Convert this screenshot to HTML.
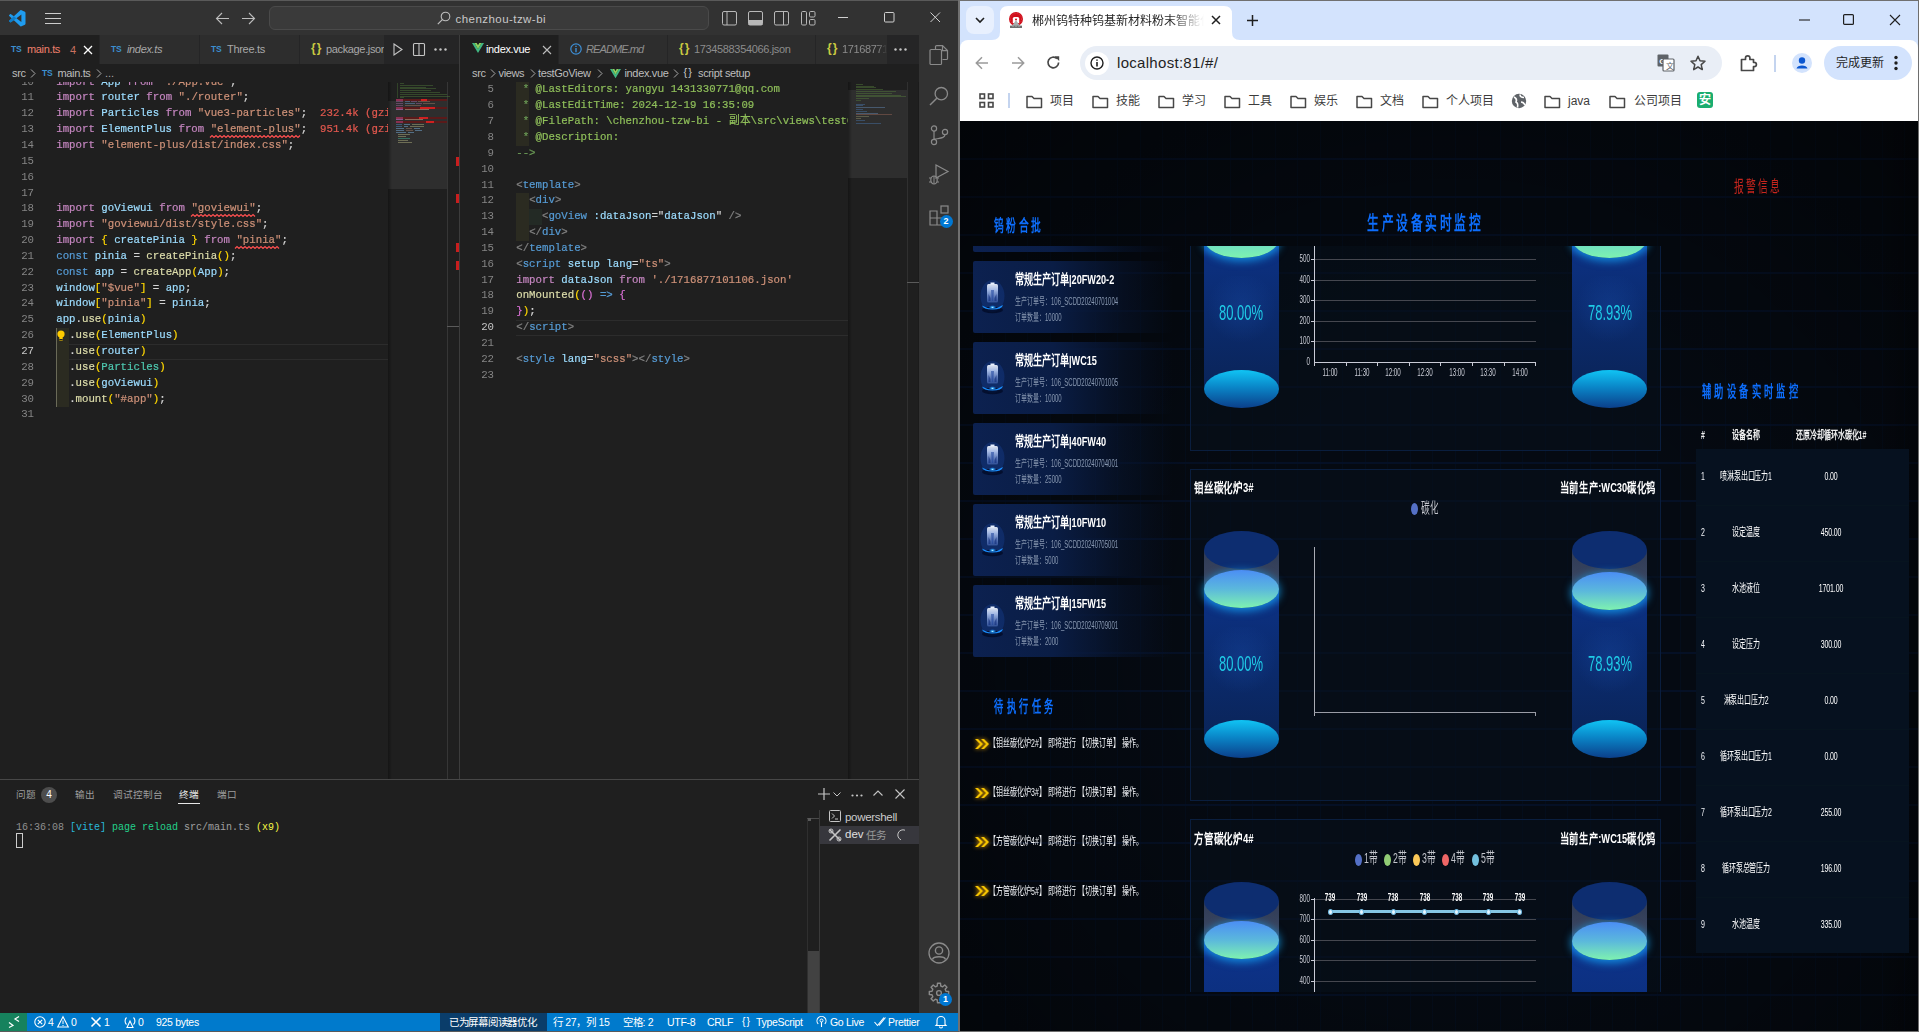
<!DOCTYPE html><html lang="zh-CN"><head><meta charset="utf-8"><title>screen</title><style>
*{margin:0;padding:0;box-sizing:border-box}
html,body{width:1919px;height:1032px;overflow:hidden;background:#1e1e1e;font-family:"Liberation Sans",sans-serif}
.a{position:absolute}
.t{white-space:pre;line-height:1}
.mono{font-family:"Liberation Mono",monospace}
svg{position:absolute;overflow:visible}
</style></head><body><div class="a " style="left:0px;top:0px;width:959px;height:1032px;background:#1f1f1f"></div><div class="a " style="left:0px;top:0px;width:960px;height:1px;background:#5a5a5a"></div><div class="a " style="left:0px;top:1px;width:958px;height:34px;background:#323232"></div><div class="a " style="left:919px;top:35px;width:39px;height:978px;background:#323232"></div><div class="a " style="left:958px;top:0px;width:2px;height:1032px;background:#707070"></div><svg style="left:9px;top:10px" width="16.5" height="16.5" viewBox="0 0 100 100"><path fill="#1f9cf0" d="M96.46 10.8L75.86.88C73.48-.26 70.62.22 68.75 2.09L29.3 38.08 12.12 25.04C10.52 23.83 8.28 23.93 6.8 25.28L1.29 30.29C-.52 31.94-.53 34.8 1.29 36.45L16.19 50 1.29 63.55C-.53 65.2-.52 68.06 1.29 69.71L6.8 74.72C8.28 76.07 10.52 76.17 12.12 74.96L29.3 61.92 68.75 97.91C70.62 99.78 73.48 100.26 75.86 99.12L96.46 89.2C98.62 88.16 100 85.97 100 83.57V16.43C100 14.03 98.62 11.84 96.46 10.8ZM75.01 72.7L45.08 50 75.01 27.3V72.7Z"/><path fill="#0065a9" opacity=".55" d="M1.29 63.55C-.53 65.2-.52 68.06 1.29 69.71L6.8 74.72C8.28 76.07 10.52 76.17 12.12 74.96L29.3 61.92 45.08 50 29.3 38.08 16.19 50Z"/></svg><svg style="left:45px;top:13px" width="17" height="11"><path d="M0 .5H16M0 5.5H16M0 10.5H16" stroke="#cccccc" stroke-width="1"/></svg><svg style="left:215px;top:12px" width="15" height="13"><path d="M14 6.5H1.5M7 1L1.5 6.5L7 12" fill="none" stroke="#bdbdbd" stroke-width="1.1"/></svg><svg style="left:241px;top:12px" width="15" height="13"><path d="M1 6.5H13.5M8 1L13.5 6.5L8 12" fill="none" stroke="#bdbdbd" stroke-width="1.1"/></svg><div class="a " style="left:269px;top:6px;width:440px;height:24px;background:#3a3a3a;border:1px solid #4a4a4a;border-radius:6px"></div><svg style="left:437px;top:11px" width="14" height="14"><circle cx="8.5" cy="5.5" r="4.3" fill="none" stroke="#bdbdbd" stroke-width="1.1"/><path d="M5.3 8.7L0.8 13.2" stroke="#bdbdbd" stroke-width="1.2"/></svg><div class="a t " style="left:455.5px;top:14px;font-size:11.5px;color:#c8c8c8;letter-spacing:0.45px">chenzhou-tzw-bi</div><svg style="left:722px;top:11px" width="16" height="15"><rect x=".5" y=".5" width="14" height="13.5" rx="1.5" fill="none" stroke="#b8b8b8" stroke-width="1"/><path d="M5 .5V14" fill="none" stroke="#b8b8b8" stroke-width="1"/></svg><svg style="left:748px;top:11px" width="16" height="15"><rect x=".5" y=".5" width="14" height="13.5" rx="1.5" fill="none" stroke="#b8b8b8" stroke-width="1"/><rect x=".5" y="9" width="14" height="5" fill="#b8b8b8"/></svg><svg style="left:774px;top:11px" width="16" height="15"><rect x=".5" y=".5" width="14" height="13.5" rx="1.5" fill="none" stroke="#b8b8b8" stroke-width="1"/><path d="M9.5 .5V14" fill="none" stroke="#b8b8b8" stroke-width="1"/></svg><svg style="left:801px;top:11px" width="16" height="15"><rect x=".5" y=".5" width="5" height="13.5" rx="1.2" fill="none" stroke="#b8b8b8" stroke-width="1"/><rect x="8.5" y=".5" width="5.5" height="5.5" rx="1.2" fill="none" stroke="#b8b8b8" stroke-width="1"/><rect x="8.5" y="8.5" width="5.5" height="5.5" rx="1.2" fill="none" stroke="#b8b8b8" stroke-width="1"/></svg><svg style="left:838px;top:17px" width="11" height="2"><path d="M0 .5H10" stroke="#d0d0d0" stroke-width="1"/></svg><svg style="left:884px;top:12px" width="11" height="11"><rect x=".5" y=".5" width="9.5" height="9.5" rx="1" fill="none" stroke="#d0d0d0" stroke-width="1"/></svg><svg style="left:930px;top:12px" width="11" height="11"><path d="M.5 .5L10 10M10 .5L.5 10" stroke="#d0d0d0" stroke-width="1"/></svg><div class="a " style="left:0px;top:35px;width:459px;height:29px;background:#252526"></div><div class="a " style="left:0px;top:35px;width:99px;height:29px;background:#1f1f1f"></div><div class="a " style="left:100px;top:35px;width:99px;height:29px;background:#2d2d2d"></div><div class="a " style="left:200px;top:35px;width:99px;height:29px;background:#2d2d2d"></div><div class="a " style="left:300px;top:35px;width:84px;height:29px;background:#2d2d2d"></div><div class="a t " style="left:11px;top:45px;font-size:8.5px;font-weight:bold;color:#3c8fd0;letter-spacing:-0.3px">TS</div><div class="a t " style="left:27px;top:44px;font-size:11px;letter-spacing:-0.35px;color:#f0806c">main.ts</div><div class="a t " style="left:70px;top:44.5px;font-size:11px;color:#c9705f">4</div><svg style="left:83px;top:45px" width="10" height="10"><path d="M1 1L9 9M9 1L1 9" stroke="#ffffff" stroke-width="1.3"/></svg><div class="a t " style="left:111px;top:45px;font-size:8.5px;font-weight:bold;color:#3c8fd0;letter-spacing:-0.3px">TS</div><div class="a t " style="left:127px;top:44px;font-size:11px;letter-spacing:-0.35px;color:#a8a8a8;font-style:italic">index.ts</div><div class="a t " style="left:211px;top:45px;font-size:8.5px;font-weight:bold;color:#3c8fd0;letter-spacing:-0.3px">TS</div><div class="a t " style="left:227px;top:44px;font-size:11px;letter-spacing:-0.3px;color:#a8a8a8">Three.ts</div><div class="a t " style="left:311px;top:42px;font-size:12px;font-weight:bold;color:#cbcb41;letter-spacing:1px">{}</div><div class="a" style="left:326px;top:35px;width:58px;height:29px;overflow:hidden"><div class="a t" style="left:0;top:9px;font-size:11px;letter-spacing:-0.35px;color:#a8a8a8">package.json</div></div><svg style="left:393px;top:43px" width="10" height="13"><path d="M1 1L9 6.5L1 12Z" fill="none" stroke="#c5c5c5" stroke-width="1.1"/></svg><svg style="left:413px;top:43px" width="12" height="13"><rect x=".5" y=".5" width="11" height="12" rx="1" fill="none" stroke="#c5c5c5" stroke-width="1.1"/><path d="M6 .5V12.5" stroke="#c5c5c5" stroke-width="1.1"/></svg><svg style="left:434px;top:48px" width="13" height="3"><circle cx="1.5" cy="1.5" r="1.2" fill="#c5c5c5"/><circle cx="6.5" cy="1.5" r="1.2" fill="#c5c5c5"/><circle cx="11.5" cy="1.5" r="1.2" fill="#c5c5c5"/></svg><div class="a t " style="left:12px;top:68px;font-size:11px;letter-spacing:-0.35px;color:#bdbdbd">src</div><svg style="left:30px;top:69px" width="6" height="9"><path d="M1 .5L5 4.5L1 8.5" fill="none" stroke="#a9a9a9" stroke-width="1"/></svg><div class="a t " style="left:42px;top:69px;font-size:8.5px;font-weight:bold;color:#3c8fd0;letter-spacing:-0.3px">TS</div><div class="a t " style="left:57.5px;top:68px;font-size:11px;letter-spacing:-0.35px;color:#bdbdbd">main.ts</div><svg style="left:95.5px;top:69px" width="6" height="9"><path d="M1 .5L5 4.5L1 8.5" fill="none" stroke="#a9a9a9" stroke-width="1"/></svg><div class="a t " style="left:105px;top:68px;font-size:11px;color:#a9a9a9">...</div><div class="a " style="left:388px;top:82px;width:59px;height:697px;background:#1f1f1f"></div><div class="a " style="left:388px;top:101px;width:59px;height:88px;background:#2e2e2e"></div><div class="a " style="left:388px;top:82px;width:4px;height:697px;background:linear-gradient(90deg,rgba(0,0,0,.35),rgba(0,0,0,0))"></div><div class="a " style="left:447px;top:82px;width:12px;height:697px;background:#1f1f1f"></div><div class="a " style="left:447px;top:82px;width:1px;height:697px;background:#363636"></div><div class="a " style="left:456px;top:157px;width:3px;height:9px;background:#c81e1e"></div><div class="a " style="left:456px;top:194px;width:3px;height:9px;background:#c81e1e"></div><div class="a " style="left:456px;top:243px;width:3px;height:9px;background:#c81e1e"></div><div class="a " style="left:456px;top:261px;width:3px;height:9px;background:#c81e1e"></div><div class="a " style="left:447px;top:326px;width:12px;height:1px;background:#5a5a5a"></div><div class="a" style="left:388px;top:82px;width:59px;height:110px"><div class="a" style="left:9px;top:1px;width:1px;height:15px;background:#3d5a2e;opacity:.6"></div><div class="a" style="left:12px;top:1.0px;width:4px;height:1px;background:#4f7a3a;opacity:.45"></div><div class="a" style="left:12px;top:2.8px;width:33px;height:1px;background:#4f7a3a;opacity:.45"></div><div class="a" style="left:12px;top:4.6px;width:26px;height:1px;background:#4f7a3a;opacity:.45"></div><div class="a" style="left:12px;top:6.4px;width:36px;height:1px;background:#4f7a3a;opacity:.45"></div><div class="a" style="left:12px;top:8.2px;width:31px;height:1px;background:#4f7a3a;opacity:.45"></div><div class="a" style="left:12px;top:10.0px;width:40px;height:1px;background:#4f7a3a;opacity:.45"></div><div class="a" style="left:12px;top:11.8px;width:47px;height:1px;background:#4f7a3a;opacity:.45"></div><div class="a" style="left:12px;top:13.6px;width:50px;height:1px;background:#4f7a3a;opacity:.45"></div><div class="a" style="left:12px;top:15.4px;width:4px;height:1px;background:#4f7a3a;opacity:.45"></div><div class="a" style="left:8px;top:16.5px;width:51px;height:2px;background:#5a1a1a"></div><div class="a" style="left:33px;top:16.5px;width:6px;height:2px;background:#d02020"></div><div class="a" style="left:8px;top:16.5px;width:7px;height:2px;background:#8a3050"></div><div class="a" style="left:8px;top:18.5px;width:7px;height:1px;background:#8a5a8a;opacity:.6"></div><div class="a" style="left:17px;top:18.5px;width:5px;height:1px;background:#5d86a8;opacity:.6"></div><div class="a" style="left:23px;top:18.5px;width:6px;height:1px;background:#8a5a8a;opacity:.6"></div><div class="a" style="left:30px;top:18.5px;width:12px;height:1px;background:#8a6a5a;opacity:.6"></div><div class="a" style="left:8px;top:20.5px;width:7px;height:1px;background:#8a5a8a;opacity:.6"></div><div class="a" style="left:17px;top:20.5px;width:10px;height:1px;background:#5d86a8;opacity:.6"></div><div class="a" style="left:28px;top:20.5px;width:6px;height:1px;background:#8a5a8a;opacity:.6"></div><div class="a" style="left:35px;top:20.5px;width:12px;height:1px;background:#8a6a5a;opacity:.6"></div><div class="a" style="left:8px;top:22.5px;width:7px;height:1px;background:#8a5a8a;opacity:.6"></div><div class="a" style="left:17px;top:22.5px;width:16px;height:1px;background:#8a6a5a;opacity:.6"></div><div class="a" style="left:8px;top:24.7px;width:51px;height:2px;background:#5a1a1a"></div><div class="a" style="left:32px;top:24.7px;width:15px;height:2px;background:#d02020"></div><div class="a" style="left:8px;top:24.7px;width:7px;height:2px;background:#8a3050"></div><div class="a" style="left:8px;top:26.7px;width:7px;height:1.3px;background:#8a5a8a"></div><div class="a" style="left:17px;top:26.7px;width:24px;height:1.3px;background:#8a6a5a"></div><div class="a" style="left:8px;top:35px;width:51px;height:2px;background:#5a1a1a"></div><div class="a" style="left:31px;top:35px;width:9px;height:2px;background:#d02020"></div><div class="a" style="left:8px;top:35px;width:7px;height:2px;background:#8a3050"></div><div class="a" style="left:8px;top:37px;width:7px;height:1.3px;background:#8a5a8a"></div><div class="a" style="left:17px;top:37px;width:18px;height:1.3px;background:#8a6a5a"></div><div class="a" style="left:8px;top:39px;width:51px;height:2px;background:#5a1a1a"></div><div class="a" style="left:38px;top:39px;width:8px;height:2px;background:#d02020"></div><div class="a" style="left:8px;top:39px;width:7px;height:2px;background:#8a3050"></div><div class="a" style="left:8px;top:41.5px;width:6px;height:1px;background:#4a78a8;opacity:.6"></div><div class="a" style="left:16px;top:41.5px;width:6px;height:1px;background:#6a9ac0;opacity:.6"></div><div class="a" style="left:24px;top:41.5px;width:12px;height:1px;background:#9a9a70;opacity:.6"></div><div class="a" style="left:8px;top:43.5px;width:6px;height:1px;background:#4a78a8;opacity:.6"></div><div class="a" style="left:16px;top:43.5px;width:4px;height:1px;background:#6a9ac0;opacity:.6"></div><div class="a" style="left:22px;top:43.5px;width:14px;height:1px;background:#9a9a70;opacity:.6"></div><div class="a" style="left:8px;top:45.5px;width:8px;height:1px;background:#6a9ac0;opacity:.6"></div><div class="a" style="left:18px;top:45.5px;width:6px;height:1px;background:#8a6a5a;opacity:.6"></div><div class="a" style="left:26px;top:45.5px;width:6px;height:1px;background:#6a9ac0;opacity:.6"></div><div class="a" style="left:8px;top:47.5px;width:8px;height:1px;background:#6a9ac0;opacity:.6"></div><div class="a" style="left:18px;top:47.5px;width:7px;height:1px;background:#8a6a5a;opacity:.6"></div><div class="a" style="left:27px;top:47.5px;width:7px;height:1px;background:#6a9ac0;opacity:.6"></div><div class="a" style="left:8px;top:49.5px;width:10px;height:1px;background:#6a9ac0;opacity:.6"></div><div class="a" style="left:20px;top:49.5px;width:6px;height:1px;background:#6a9ac0;opacity:.6"></div><div class="a" style="left:10px;top:51.5px;width:12px;height:1px;background:#9a9a70;opacity:.6"></div><div class="a" style="left:10px;top:53.5px;width:8px;height:1px;background:#9a9a70;opacity:.6"></div><div class="a" style="left:10px;top:55.5px;width:12px;height:1px;background:#3a9a80;opacity:.6"></div><div class="a" style="left:10px;top:57.5px;width:10px;height:1px;background:#9a9a70;opacity:.6"></div><div class="a" style="left:10px;top:59.5px;width:14px;height:1px;background:#9a9a70;opacity:.6"></div></div><div class="a" style="left:0;top:82px;width:388px;height:697px;overflow:hidden"><div class="a" style="left:56px;top:262.00px;width:332px;height:15.85px;border-top:1px solid #2c2c2c;border-bottom:1px solid #2c2c2c"></div><div class="a" style="left:56px;top:246.15px;width:13px;height:79.25px;background:#2b2b21"></div><div class="a" style="left:56px;top:246.15px;width:1px;height:79.25px;background:#6a6a58"></div><div class="a t mono" style="left:0;width:34px;text-align:right;top:-7.45px;height:15.85px;line-height:15.85px;font-size:10.72px;transform:scaleY(1.1);color:#858585">10</div><div class="a t mono" style="left:56.25px;top:-7.45px;height:15.85px;line-height:15.85px;font-size:10.72px;transform:scaleY(1.1);-webkit-text-stroke:0.2px;"><span style="color:#c586c0">import</span><span style="color:#d4d4d4"> </span><span style="color:#9cdcfe">App</span><span style="color:#d4d4d4"> </span><span style="color:#c586c0">from</span><span style="color:#d4d4d4"> </span><span style="color:#ce9178">"./App.vue"</span><span style="color:#d4d4d4">;</span></div><div class="a t mono" style="left:0;width:34px;text-align:right;top:8.40px;height:15.85px;line-height:15.85px;font-size:10.72px;transform:scaleY(1.1);color:#858585">11</div><div class="a t mono" style="left:56.25px;top:8.40px;height:15.85px;line-height:15.85px;font-size:10.72px;transform:scaleY(1.1);-webkit-text-stroke:0.2px;"><span style="color:#c586c0">import</span><span style="color:#d4d4d4"> </span><span style="color:#9cdcfe">router</span><span style="color:#d4d4d4"> </span><span style="color:#c586c0">from</span><span style="color:#d4d4d4"> </span><span style="color:#ce9178">"./router"</span><span style="color:#d4d4d4">;</span></div><div class="a t mono" style="left:0;width:34px;text-align:right;top:24.25px;height:15.85px;line-height:15.85px;font-size:10.72px;transform:scaleY(1.1);color:#858585">12</div><div class="a t mono" style="left:56.25px;top:24.25px;height:15.85px;line-height:15.85px;font-size:10.72px;transform:scaleY(1.1);-webkit-text-stroke:0.2px;"><span style="color:#c586c0">import</span><span style="color:#d4d4d4"> </span><span style="color:#9cdcfe">Particles</span><span style="color:#d4d4d4"> </span><span style="color:#c586c0">from</span><span style="color:#d4d4d4"> </span><span style="color:#ce9178">"vue3-particles"</span><span style="color:#d4d4d4">;</span><span style="color:#e2584e">  232.4k (gzip: 60.1k)</span></div><div class="a t mono" style="left:0;width:34px;text-align:right;top:40.10px;height:15.85px;line-height:15.85px;font-size:10.72px;transform:scaleY(1.1);color:#858585">13</div><div class="a t mono" style="left:56.25px;top:40.10px;height:15.85px;line-height:15.85px;font-size:10.72px;transform:scaleY(1.1);-webkit-text-stroke:0.2px;"><span style="color:#c586c0">import</span><span style="color:#d4d4d4"> </span><span style="color:#9cdcfe">ElementPlus</span><span style="color:#d4d4d4"> </span><span style="color:#c586c0">from</span><span style="color:#d4d4d4"> </span><span style="color:#ce9178">"element-plus"</span><span style="color:#d4d4d4">;</span><span style="color:#e2584e">  951.4k (gzip: 282k)</span></div><div class="a t mono" style="left:0;width:34px;text-align:right;top:55.95px;height:15.85px;line-height:15.85px;font-size:10.72px;transform:scaleY(1.1);color:#858585">14</div><div class="a t mono" style="left:56.25px;top:55.95px;height:15.85px;line-height:15.85px;font-size:10.72px;transform:scaleY(1.1);-webkit-text-stroke:0.2px;"><span style="color:#c586c0">import</span><span style="color:#d4d4d4"> </span><span style="color:#ce9178">"element-plus/dist/index.css"</span><span style="color:#d4d4d4">;</span></div><div class="a t mono" style="left:0;width:34px;text-align:right;top:71.80px;height:15.85px;line-height:15.85px;font-size:10.72px;transform:scaleY(1.1);color:#858585">15</div><div class="a t mono" style="left:0;width:34px;text-align:right;top:87.65px;height:15.85px;line-height:15.85px;font-size:10.72px;transform:scaleY(1.1);color:#858585">16</div><div class="a t mono" style="left:0;width:34px;text-align:right;top:103.50px;height:15.85px;line-height:15.85px;font-size:10.72px;transform:scaleY(1.1);color:#858585">17</div><div class="a t mono" style="left:0;width:34px;text-align:right;top:119.35px;height:15.85px;line-height:15.85px;font-size:10.72px;transform:scaleY(1.1);color:#858585">18</div><div class="a t mono" style="left:56.25px;top:119.35px;height:15.85px;line-height:15.85px;font-size:10.72px;transform:scaleY(1.1);-webkit-text-stroke:0.2px;"><span style="color:#c586c0">import</span><span style="color:#d4d4d4"> </span><span style="color:#9cdcfe">goViewui</span><span style="color:#d4d4d4"> </span><span style="color:#c586c0">from</span><span style="color:#d4d4d4"> </span><span style="color:#ce9178">"goviewui"</span><span style="color:#d4d4d4">;</span></div><div class="a t mono" style="left:0;width:34px;text-align:right;top:135.20px;height:15.85px;line-height:15.85px;font-size:10.72px;transform:scaleY(1.1);color:#858585">19</div><div class="a t mono" style="left:56.25px;top:135.20px;height:15.85px;line-height:15.85px;font-size:10.72px;transform:scaleY(1.1);-webkit-text-stroke:0.2px;"><span style="color:#c586c0">import</span><span style="color:#d4d4d4"> </span><span style="color:#ce9178">"goviewui/dist/style.css"</span><span style="color:#d4d4d4">;</span></div><div class="a t mono" style="left:0;width:34px;text-align:right;top:151.05px;height:15.85px;line-height:15.85px;font-size:10.72px;transform:scaleY(1.1);color:#858585">20</div><div class="a t mono" style="left:56.25px;top:151.05px;height:15.85px;line-height:15.85px;font-size:10.72px;transform:scaleY(1.1);-webkit-text-stroke:0.2px;"><span style="color:#c586c0">import</span><span style="color:#d4d4d4"> </span><span style="color:#ffd700">{</span><span style="color:#9cdcfe"> createPinia </span><span style="color:#ffd700">}</span><span style="color:#d4d4d4"> </span><span style="color:#c586c0">from</span><span style="color:#d4d4d4"> </span><span style="color:#ce9178">"pinia"</span><span style="color:#d4d4d4">;</span></div><div class="a t mono" style="left:0;width:34px;text-align:right;top:166.90px;height:15.85px;line-height:15.85px;font-size:10.72px;transform:scaleY(1.1);color:#858585">21</div><div class="a t mono" style="left:56.25px;top:166.90px;height:15.85px;line-height:15.85px;font-size:10.72px;transform:scaleY(1.1);-webkit-text-stroke:0.2px;"><span style="color:#569cd6">const</span><span style="color:#d4d4d4"> </span><span style="color:#9cdcfe">pinia</span><span style="color:#d4d4d4"> = </span><span style="color:#dcdcaa">createPinia</span><span style="color:#ffd700">()</span><span style="color:#d4d4d4">;</span></div><div class="a t mono" style="left:0;width:34px;text-align:right;top:182.75px;height:15.85px;line-height:15.85px;font-size:10.72px;transform:scaleY(1.1);color:#858585">22</div><div class="a t mono" style="left:56.25px;top:182.75px;height:15.85px;line-height:15.85px;font-size:10.72px;transform:scaleY(1.1);-webkit-text-stroke:0.2px;"><span style="color:#569cd6">const</span><span style="color:#d4d4d4"> </span><span style="color:#9cdcfe">app</span><span style="color:#d4d4d4"> = </span><span style="color:#dcdcaa">createApp</span><span style="color:#ffd700">(</span><span style="color:#9cdcfe">App</span><span style="color:#ffd700">)</span><span style="color:#d4d4d4">;</span></div><div class="a t mono" style="left:0;width:34px;text-align:right;top:198.60px;height:15.85px;line-height:15.85px;font-size:10.72px;transform:scaleY(1.1);color:#858585">23</div><div class="a t mono" style="left:56.25px;top:198.60px;height:15.85px;line-height:15.85px;font-size:10.72px;transform:scaleY(1.1);-webkit-text-stroke:0.2px;"><span style="color:#9cdcfe">window</span><span style="color:#ffd700">[</span><span style="color:#ce9178">"$vue"</span><span style="color:#ffd700">]</span><span style="color:#d4d4d4"> = </span><span style="color:#9cdcfe">app</span><span style="color:#d4d4d4">;</span></div><div class="a t mono" style="left:0;width:34px;text-align:right;top:214.45px;height:15.85px;line-height:15.85px;font-size:10.72px;transform:scaleY(1.1);color:#858585">24</div><div class="a t mono" style="left:56.25px;top:214.45px;height:15.85px;line-height:15.85px;font-size:10.72px;transform:scaleY(1.1);-webkit-text-stroke:0.2px;"><span style="color:#9cdcfe">window</span><span style="color:#ffd700">[</span><span style="color:#ce9178">"pinia"</span><span style="color:#ffd700">]</span><span style="color:#d4d4d4"> = </span><span style="color:#9cdcfe">pinia</span><span style="color:#d4d4d4">;</span></div><div class="a t mono" style="left:0;width:34px;text-align:right;top:230.30px;height:15.85px;line-height:15.85px;font-size:10.72px;transform:scaleY(1.1);color:#858585">25</div><div class="a t mono" style="left:56.25px;top:230.30px;height:15.85px;line-height:15.85px;font-size:10.72px;transform:scaleY(1.1);-webkit-text-stroke:0.2px;"><span style="color:#9cdcfe">app</span><span style="color:#d4d4d4">.</span><span style="color:#dcdcaa">use</span><span style="color:#ffd700">(</span><span style="color:#9cdcfe">pinia</span><span style="color:#ffd700">)</span></div><div class="a t mono" style="left:0;width:34px;text-align:right;top:246.15px;height:15.85px;line-height:15.85px;font-size:10.72px;transform:scaleY(1.1);color:#858585">26</div><div class="a t mono" style="left:56.25px;top:246.15px;height:15.85px;line-height:15.85px;font-size:10.72px;transform:scaleY(1.1);-webkit-text-stroke:0.2px;"><span style="color:#d4d4d4">  </span><span style="color:#d4d4d4">.</span><span style="color:#dcdcaa">use</span><span style="color:#ffd700">(</span><span style="color:#9cdcfe">ElementPlus</span><span style="color:#ffd700">)</span></div><div class="a t mono" style="left:0;width:34px;text-align:right;top:262.00px;height:15.85px;line-height:15.85px;font-size:10.72px;transform:scaleY(1.1);color:#c6c6c6">27</div><div class="a t mono" style="left:56.25px;top:262.00px;height:15.85px;line-height:15.85px;font-size:10.72px;transform:scaleY(1.1);-webkit-text-stroke:0.2px;"><span style="color:#d4d4d4">  </span><span style="color:#d4d4d4">.</span><span style="color:#dcdcaa">use</span><span style="color:#ffd700">(</span><span style="color:#9cdcfe">router</span><span style="color:#ffd700">)</span></div><div class="a t mono" style="left:0;width:34px;text-align:right;top:277.85px;height:15.85px;line-height:15.85px;font-size:10.72px;transform:scaleY(1.1);color:#858585">28</div><div class="a t mono" style="left:56.25px;top:277.85px;height:15.85px;line-height:15.85px;font-size:10.72px;transform:scaleY(1.1);-webkit-text-stroke:0.2px;"><span style="color:#d4d4d4">  </span><span style="color:#d4d4d4">.</span><span style="color:#dcdcaa">use</span><span style="color:#ffd700">(</span><span style="color:#4ec9b0">Particles</span><span style="color:#ffd700">)</span></div><div class="a t mono" style="left:0;width:34px;text-align:right;top:293.70px;height:15.85px;line-height:15.85px;font-size:10.72px;transform:scaleY(1.1);color:#858585">29</div><div class="a t mono" style="left:56.25px;top:293.70px;height:15.85px;line-height:15.85px;font-size:10.72px;transform:scaleY(1.1);-webkit-text-stroke:0.2px;"><span style="color:#d4d4d4">  </span><span style="color:#d4d4d4">.</span><span style="color:#dcdcaa">use</span><span style="color:#ffd700">(</span><span style="color:#9cdcfe">goViewui</span><span style="color:#ffd700">)</span></div><div class="a t mono" style="left:0;width:34px;text-align:right;top:309.55px;height:15.85px;line-height:15.85px;font-size:10.72px;transform:scaleY(1.1);color:#858585">30</div><div class="a t mono" style="left:56.25px;top:309.55px;height:15.85px;line-height:15.85px;font-size:10.72px;transform:scaleY(1.1);-webkit-text-stroke:0.2px;"><span style="color:#d4d4d4">  </span><span style="color:#d4d4d4">.</span><span style="color:#dcdcaa">mount</span><span style="color:#ffd700">(</span><span style="color:#ce9178">"#app"</span><span style="color:#ffd700">)</span><span style="color:#d4d4d4">;</span></div><div class="a t mono" style="left:0;width:34px;text-align:right;top:325.40px;height:15.85px;line-height:15.85px;font-size:10.72px;transform:scaleY(1.1);color:#858585">31</div><svg style="left:210px;top:52.70px" width="90" height="3.5"><path d="M0 2.5 L2 0.5 L4 2.5 L6 0.5 L8 2.5 L10 0.5 L12 2.5 L14 0.5 L16 2.5 L18 0.5 L20 2.5 L22 0.5 L24 2.5 L26 0.5 L28 2.5 L30 0.5 L32 2.5 L34 0.5 L36 2.5 L38 0.5 L40 2.5 L42 0.5 L44 2.5 L46 0.5 L48 2.5 L50 0.5 L52 2.5 L54 0.5 L56 2.5 L58 0.5 L60 2.5 L62 0.5 L64 2.5 L66 0.5 L68 2.5 L70 0.5 L72 2.5 L74 0.5 L76 2.5 L78 0.5 L80 2.5 L82 0.5 L84 2.5 L86 0.5 L88 2.5 L90 0.5" fill="none" stroke="#ff5050" stroke-width="1.15"/></svg><svg style="left:191px;top:131.95px" width="64" height="3.5"><path d="M0 2.5 L2 0.5 L4 2.5 L6 0.5 L8 2.5 L10 0.5 L12 2.5 L14 0.5 L16 2.5 L18 0.5 L20 2.5 L22 0.5 L24 2.5 L26 0.5 L28 2.5 L30 0.5 L32 2.5 L34 0.5 L36 2.5 L38 0.5 L40 2.5 L42 0.5 L44 2.5 L46 0.5 L48 2.5 L50 0.5 L52 2.5 L54 0.5 L56 2.5 L58 0.5 L60 2.5 L62 0.5 L64 2.5" fill="none" stroke="#ff5050" stroke-width="1.15"/></svg><svg style="left:235px;top:163.65px" width="45" height="3.5"><path d="M0 2.5 L2 0.5 L4 2.5 L6 0.5 L8 2.5 L10 0.5 L12 2.5 L14 0.5 L16 2.5 L18 0.5 L20 2.5 L22 0.5 L24 2.5 L26 0.5 L28 2.5 L30 0.5 L32 2.5 L34 0.5 L36 2.5 L38 0.5 L40 2.5 L42 0.5 L44 2.5" fill="none" stroke="#ff5050" stroke-width="1.15"/></svg><svg style="left:57px;top:248.15px" width="8" height="12"><circle cx="4" cy="4" r="3.6" fill="#ffcc00"/><rect x="2.3" y="6.5" width="3.4" height="4" fill="#ffcc00"/><rect x="2.3" y="9" width="3.4" height="1" fill="#1f1f1f"/></svg></div><div class="a " style="left:459px;top:35px;width:1px;height:744px;background:#3c3c3c"></div><div class="a " style="left:460px;top:35px;width:459px;height:29px;background:#252526"></div><div class="a " style="left:460px;top:35px;width:98px;height:29px;background:#1f1f1f"></div><div class="a " style="left:559px;top:35px;width:108px;height:29px;background:#2d2d2d"></div><div class="a " style="left:668px;top:35px;width:147px;height:29px;background:#2d2d2d"></div><div class="a " style="left:816px;top:35px;width:71px;height:29px;background:#2d2d2d"></div><svg style="left:472px;top:43px" width="12" height="10.2" viewBox="0 0 24 20"><path d="M0 0H5L12 12L19 0H24L12 20Z" fill="#41b883"/><path d="M5 0H9.5L12 4.5L14.5 0H19L12 12Z" fill="#8dd35f"/></svg><div class="a t " style="left:486px;top:44px;font-size:11px;letter-spacing:-0.35px;color:#ffffff">index.vue</div><svg style="left:542px;top:45px" width="10" height="10"><path d="M1 1L9 9M9 1L1 9" stroke="#bdbdbd" stroke-width="1.1"/></svg><svg style="left:570px;top:43px" width="12" height="12"><circle cx="6" cy="6" r="5.2" fill="none" stroke="#3d8fd6" stroke-width="1.2"/><path d="M6 5V9.3M6 2.8V3.9" stroke="#3d8fd6" stroke-width="1.4"/></svg><div class="a t " style="left:586px;top:44px;font-size:11px;letter-spacing:-0.9px;color:#8f8f8f;font-style:italic">README.md</div><div class="a t " style="left:679px;top:42px;font-size:12px;font-weight:bold;color:#cbcb41;letter-spacing:1px">{}</div><div class="a t " style="left:694px;top:44px;font-size:11px;letter-spacing:-0.35px;color:#8c8c8c">1734588354066.json</div><div class="a t " style="left:827px;top:42px;font-size:12px;font-weight:bold;color:#cbcb41;letter-spacing:1px">{}</div><div class="a" style="left:842px;top:35px;width:45px;height:29px;overflow:hidden;-webkit-mask-image:linear-gradient(90deg,#000 80%,transparent)"><div class="a t" style="left:0;top:9px;font-size:11px;letter-spacing:-0.35px;color:#8c8c8c">1716877101106.json</div></div><svg style="left:894px;top:48px" width="13" height="3"><circle cx="1.5" cy="1.5" r="1.2" fill="#c5c5c5"/><circle cx="6.5" cy="1.5" r="1.2" fill="#c5c5c5"/><circle cx="11.5" cy="1.5" r="1.2" fill="#c5c5c5"/></svg><div class="a t " style="left:472px;top:68px;font-size:11px;letter-spacing:-0.35px;color:#bdbdbd">src</div><svg style="left:490px;top:69px" width="6" height="9"><path d="M1 .5L5 4.5L1 8.5" fill="none" stroke="#a9a9a9" stroke-width="1"/></svg><div class="a t " style="left:498.5px;top:68px;font-size:11px;letter-spacing:-0.35px;color:#bdbdbd">views</div><svg style="left:529.5px;top:69px" width="6" height="9"><path d="M1 .5L5 4.5L1 8.5" fill="none" stroke="#a9a9a9" stroke-width="1"/></svg><div class="a t " style="left:538px;top:68px;font-size:11px;letter-spacing:-0.35px;color:#bdbdbd">testGoView</div><svg style="left:597px;top:69px" width="6" height="9"><path d="M1 .5L5 4.5L1 8.5" fill="none" stroke="#a9a9a9" stroke-width="1"/></svg><svg style="left:610px;top:69px" width="11" height="9.3" viewBox="0 0 24 20"><path d="M0 0H5L12 12L19 0H24L12 20Z" fill="#41b883"/><path d="M5 0H9.5L12 4.5L14.5 0H19L12 12Z" fill="#8dd35f"/></svg><div class="a t " style="left:624.5px;top:68px;font-size:11px;letter-spacing:-0.35px;color:#bdbdbd">index.vue</div><svg style="left:673px;top:69px" width="6" height="9"><path d="M1 .5L5 4.5L1 8.5" fill="none" stroke="#a9a9a9" stroke-width="1"/></svg><div class="a t " style="left:683.5px;top:67px;font-size:11px;color:#c8c8c8;letter-spacing:1px">{}</div><div class="a t " style="left:698px;top:68px;font-size:11px;letter-spacing:-0.35px;color:#bdbdbd">script setup</div><div class="a " style="left:848px;top:82px;width:59px;height:697px;background:#1f1f1f"></div><div class="a " style="left:848px;top:90px;width:59px;height:88px;background:#2e2e2e"></div><div class="a " style="left:848px;top:82px;width:4px;height:697px;background:linear-gradient(90deg,rgba(0,0,0,.35),rgba(0,0,0,0))"></div><div class="a" style="left:848px;top:82px;width:59px;height:80px"><div class="a" style="left:8px;top:1.8px;width:7.2px;height:1px;background:#5d8a3e;opacity:.4"></div><div class="a" style="left:8px;top:3.6px;width:18.0px;height:1px;background:#5d8a3e;opacity:.4"></div><div class="a" style="left:8px;top:5.4px;width:19.8px;height:1px;background:#5d8a3e;opacity:.4"></div><div class="a" style="left:8px;top:7.2px;width:27.0px;height:1px;background:#5d8a3e;opacity:.4"></div><div class="a" style="left:8px;top:9.0px;width:39.6px;height:1px;background:#5d8a3e;opacity:.4"></div><div class="a" style="left:8px;top:10.8px;width:36.0px;height:1px;background:#5d8a3e;opacity:.4"></div><div class="a" style="left:8px;top:12.6px;width:45.0px;height:1px;background:#5d8a3e;opacity:.4"></div><div class="a" style="left:8px;top:14.4px;width:49.5px;height:1px;background:#5d8a3e;opacity:.4"></div><div class="a" style="left:8px;top:16.2px;width:12.6px;height:1px;background:#5d8a3e;opacity:.4"></div><div class="a" style="left:8px;top:18.0px;width:5.4px;height:1px;background:#5d8a3e;opacity:.4"></div><div class="a" style="left:8px;top:21.6px;width:9.0px;height:1px;background:#4a7fbf;opacity:.4"></div><div class="a" style="left:8px;top:23.4px;width:7.2px;height:1px;background:#4a7fbf;opacity:.4"></div><div class="a" style="left:8px;top:25.2px;width:28.8px;height:1px;background:#6d9bd0;opacity:.4"></div><div class="a" style="left:8px;top:27.0px;width:7.2px;height:1px;background:#4a7fbf;opacity:.4"></div><div class="a" style="left:8px;top:28.8px;width:10.8px;height:1px;background:#4a7fbf;opacity:.4"></div><div class="a" style="left:8px;top:30.6px;width:21.6px;height:1px;background:#6d9bd0;opacity:.4"></div><div class="a" style="left:8px;top:32.4px;width:36.0px;height:1px;background:#b07060;opacity:.4"></div><div class="a" style="left:8px;top:34.2px;width:12.6px;height:1px;background:#a0a070;opacity:.4"></div><div class="a" style="left:8px;top:36.0px;width:5.4px;height:1px;background:#a0a070;opacity:.4"></div><div class="a" style="left:8px;top:37.8px;width:9.0px;height:1px;background:#4a7fbf;opacity:.4"></div><div class="a" style="left:8px;top:41.4px;width:25.2px;height:1px;background:#4a7fbf;opacity:.4"></div></div><div class="a " style="left:907px;top:82px;width:12px;height:697px;background:#1f1f1f"></div><div class="a " style="left:907px;top:82px;width:1px;height:697px;background:#303030"></div><div class="a " style="left:918px;top:82px;width:1px;height:697px;background:#1b1b1b"></div><div class="a " style="left:907px;top:282px;width:12px;height:1px;background:#5a5a5a"></div><div class="a" style="left:460px;top:82px;width:388px;height:697px;overflow:hidden"><div class="a" style="left:56px;top:238.15px;width:332px;height:15.85px;border-top:1px solid #2c2c2c;border-bottom:1px solid #2c2c2c"></div><div class="a" style="left:56px;top:0.40px;width:13px;height:63.40px;background:#2b2b21"></div><div class="a" style="left:56px;top:111.35px;width:13px;height:47.55px;background:#2b2b21"></div><div class="a" style="left:69px;top:127.20px;width:13px;height:15.85px;background:#232a25"></div><div class="a t mono" style="left:0;width:34px;text-align:right;top:0.40px;height:15.85px;line-height:15.85px;font-size:10.72px;transform:scaleY(1.1);color:#858585">5</div><div class="a t mono" style="left:56.25px;top:0.40px;height:15.85px;line-height:15.85px;font-size:10.72px;transform:scaleY(1.1);-webkit-text-stroke:0.2px;"><span style="color:#d4d4d4"> </span><span style="color:#6a9955">*</span><span style="color:#8fbf5a"> @LastEditors: yangyu 1431330771@qq.com</span></div><div class="a t mono" style="left:0;width:34px;text-align:right;top:16.25px;height:15.85px;line-height:15.85px;font-size:10.72px;transform:scaleY(1.1);color:#858585">6</div><div class="a t mono" style="left:56.25px;top:16.25px;height:15.85px;line-height:15.85px;font-size:10.72px;transform:scaleY(1.1);-webkit-text-stroke:0.2px;"><span style="color:#d4d4d4"> </span><span style="color:#6a9955">*</span><span style="color:#8fbf5a"> @LastEditTime: 2024-12-19 16:35:09</span></div><div class="a t mono" style="left:0;width:34px;text-align:right;top:32.10px;height:15.85px;line-height:15.85px;font-size:10.72px;transform:scaleY(1.1);color:#858585">7</div><div class="a t mono" style="left:56.25px;top:32.10px;height:15.85px;line-height:15.85px;font-size:10.72px;transform:scaleY(1.1);-webkit-text-stroke:0.2px;"><span style="color:#d4d4d4"> </span><span style="color:#6a9955">*</span><span style="color:#8fbf5a"> @FilePath: \chenzhou-tzw-bi - 副本\src\views\testGoView\index.vue</span></div><div class="a t mono" style="left:0;width:34px;text-align:right;top:47.95px;height:15.85px;line-height:15.85px;font-size:10.72px;transform:scaleY(1.1);color:#858585">8</div><div class="a t mono" style="left:56.25px;top:47.95px;height:15.85px;line-height:15.85px;font-size:10.72px;transform:scaleY(1.1);-webkit-text-stroke:0.2px;"><span style="color:#d4d4d4"> </span><span style="color:#6a9955">*</span><span style="color:#8fbf5a"> @Description:</span></div><div class="a t mono" style="left:0;width:34px;text-align:right;top:63.80px;height:15.85px;line-height:15.85px;font-size:10.72px;transform:scaleY(1.1);color:#858585">9</div><div class="a t mono" style="left:56.25px;top:63.80px;height:15.85px;line-height:15.85px;font-size:10.72px;transform:scaleY(1.1);-webkit-text-stroke:0.2px;"><span style="color:#6a9955">--&gt;</span></div><div class="a t mono" style="left:0;width:34px;text-align:right;top:79.65px;height:15.85px;line-height:15.85px;font-size:10.72px;transform:scaleY(1.1);color:#858585">10</div><div class="a t mono" style="left:0;width:34px;text-align:right;top:95.50px;height:15.85px;line-height:15.85px;font-size:10.72px;transform:scaleY(1.1);color:#858585">11</div><div class="a t mono" style="left:56.25px;top:95.50px;height:15.85px;line-height:15.85px;font-size:10.72px;transform:scaleY(1.1);-webkit-text-stroke:0.2px;"><span style="color:#808080">&lt;</span><span style="color:#569cd6">template</span><span style="color:#808080">&gt;</span></div><div class="a t mono" style="left:0;width:34px;text-align:right;top:111.35px;height:15.85px;line-height:15.85px;font-size:10.72px;transform:scaleY(1.1);color:#858585">12</div><div class="a t mono" style="left:56.25px;top:111.35px;height:15.85px;line-height:15.85px;font-size:10.72px;transform:scaleY(1.1);-webkit-text-stroke:0.2px;"><span style="color:#d4d4d4">  </span><span style="color:#808080">&lt;</span><span style="color:#569cd6">div</span><span style="color:#808080">&gt;</span></div><div class="a t mono" style="left:0;width:34px;text-align:right;top:127.20px;height:15.85px;line-height:15.85px;font-size:10.72px;transform:scaleY(1.1);color:#858585">13</div><div class="a t mono" style="left:56.25px;top:127.20px;height:15.85px;line-height:15.85px;font-size:10.72px;transform:scaleY(1.1);-webkit-text-stroke:0.2px;"><span style="color:#d4d4d4">    </span><span style="color:#808080">&lt;</span><span style="color:#569cd6">goView</span><span style="color:#d4d4d4"> </span><span style="color:#9cdcfe">:dataJson</span><span style="color:#d4d4d4">=</span><span style="color:#d4d4d4">"</span><span style="color:#9cdcfe">dataJson</span><span style="color:#d4d4d4">"</span><span style="color:#808080"> /&gt;</span></div><div class="a t mono" style="left:0;width:34px;text-align:right;top:143.05px;height:15.85px;line-height:15.85px;font-size:10.72px;transform:scaleY(1.1);color:#858585">14</div><div class="a t mono" style="left:56.25px;top:143.05px;height:15.85px;line-height:15.85px;font-size:10.72px;transform:scaleY(1.1);-webkit-text-stroke:0.2px;"><span style="color:#d4d4d4">  </span><span style="color:#808080">&lt;/</span><span style="color:#569cd6">div</span><span style="color:#808080">&gt;</span></div><div class="a t mono" style="left:0;width:34px;text-align:right;top:158.90px;height:15.85px;line-height:15.85px;font-size:10.72px;transform:scaleY(1.1);color:#858585">15</div><div class="a t mono" style="left:56.25px;top:158.90px;height:15.85px;line-height:15.85px;font-size:10.72px;transform:scaleY(1.1);-webkit-text-stroke:0.2px;"><span style="color:#808080">&lt;/</span><span style="color:#569cd6">template</span><span style="color:#808080">&gt;</span></div><div class="a t mono" style="left:0;width:34px;text-align:right;top:174.75px;height:15.85px;line-height:15.85px;font-size:10.72px;transform:scaleY(1.1);color:#858585">16</div><div class="a t mono" style="left:56.25px;top:174.75px;height:15.85px;line-height:15.85px;font-size:10.72px;transform:scaleY(1.1);-webkit-text-stroke:0.2px;"><span style="color:#808080">&lt;</span><span style="color:#569cd6">script</span><span style="color:#d4d4d4"> </span><span style="color:#9cdcfe">setup</span><span style="color:#d4d4d4"> </span><span style="color:#9cdcfe">lang</span><span style="color:#d4d4d4">=</span><span style="color:#ce9178">"ts"</span><span style="color:#808080">&gt;</span></div><div class="a t mono" style="left:0;width:34px;text-align:right;top:190.60px;height:15.85px;line-height:15.85px;font-size:10.72px;transform:scaleY(1.1);color:#858585">17</div><div class="a t mono" style="left:56.25px;top:190.60px;height:15.85px;line-height:15.85px;font-size:10.72px;transform:scaleY(1.1);-webkit-text-stroke:0.2px;"><span style="color:#c586c0">import</span><span style="color:#d4d4d4"> </span><span style="color:#9cdcfe">dataJson</span><span style="color:#d4d4d4"> </span><span style="color:#c586c0">from</span><span style="color:#d4d4d4"> </span><span style="color:#ce9178">'./1716877101106.json'</span></div><div class="a t mono" style="left:0;width:34px;text-align:right;top:206.45px;height:15.85px;line-height:15.85px;font-size:10.72px;transform:scaleY(1.1);color:#858585">18</div><div class="a t mono" style="left:56.25px;top:206.45px;height:15.85px;line-height:15.85px;font-size:10.72px;transform:scaleY(1.1);-webkit-text-stroke:0.2px;"><span style="color:#dcdcaa">onMounted</span><span style="color:#ffd700">(</span><span style="color:#da70d6">()</span><span style="color:#d4d4d4"> </span><span style="color:#569cd6">=&gt;</span><span style="color:#d4d4d4"> </span><span style="color:#da70d6">{</span></div><div class="a t mono" style="left:0;width:34px;text-align:right;top:222.30px;height:15.85px;line-height:15.85px;font-size:10.72px;transform:scaleY(1.1);color:#858585">19</div><div class="a t mono" style="left:56.25px;top:222.30px;height:15.85px;line-height:15.85px;font-size:10.72px;transform:scaleY(1.1);-webkit-text-stroke:0.2px;"><span style="color:#da70d6">}</span><span style="color:#ffd700">)</span><span style="color:#d4d4d4">;</span></div><div class="a t mono" style="left:0;width:34px;text-align:right;top:238.15px;height:15.85px;line-height:15.85px;font-size:10.72px;transform:scaleY(1.1);color:#c6c6c6">20</div><div class="a t mono" style="left:56.25px;top:238.15px;height:15.85px;line-height:15.85px;font-size:10.72px;transform:scaleY(1.1);-webkit-text-stroke:0.2px;"><span style="color:#808080">&lt;/</span><span style="color:#569cd6">script</span><span style="color:#808080">&gt;</span></div><div class="a t mono" style="left:0;width:34px;text-align:right;top:254.00px;height:15.85px;line-height:15.85px;font-size:10.72px;transform:scaleY(1.1);color:#858585">21</div><div class="a t mono" style="left:0;width:34px;text-align:right;top:269.85px;height:15.85px;line-height:15.85px;font-size:10.72px;transform:scaleY(1.1);color:#858585">22</div><div class="a t mono" style="left:56.25px;top:269.85px;height:15.85px;line-height:15.85px;font-size:10.72px;transform:scaleY(1.1);-webkit-text-stroke:0.2px;"><span style="color:#808080">&lt;</span><span style="color:#569cd6">style</span><span style="color:#d4d4d4"> </span><span style="color:#9cdcfe">lang</span><span style="color:#d4d4d4">=</span><span style="color:#ce9178">"scss"</span><span style="color:#808080">&gt;&lt;/</span><span style="color:#569cd6">style</span><span style="color:#808080">&gt;</span></div><div class="a t mono" style="left:0;width:34px;text-align:right;top:285.70px;height:15.85px;line-height:15.85px;font-size:10.72px;transform:scaleY(1.1);color:#858585">23</div></div><div class="a " style="left:0px;top:779px;width:919px;height:1px;background:#474747"></div><div class="a " style="left:0px;top:780px;width:919px;height:233px;background:#1f1f1f"></div><div class="a t " style="left:15.5px;top:789.5px;font-size:9.6px;color:#9d9d9d">问题</div><div class="a" style="left:41px;top:787px;width:16px;height:16px;border-radius:8px;background:#4d4d4d;color:#fff;font-size:10px;line-height:16px;text-align:center">4</div><div class="a t " style="left:75px;top:789.5px;font-size:9.6px;color:#9d9d9d">输出</div><div class="a t " style="left:113px;top:789.5px;font-size:9.6px;color:#9d9d9d">调试控制台</div><div class="a t " style="left:179px;top:789.5px;font-size:9.6px;color:#e7e7e7">终端</div><div class="a t " style="left:217px;top:789.5px;font-size:9.6px;color:#9d9d9d">端口</div><div class="a " style="left:178px;top:803px;width:22px;height:1px;background:#e7e7e7"></div><svg style="left:818px;top:788px" width="12" height="12"><path d="M6 0V12M0 6H12" stroke="#c5c5c5" stroke-width="1.2"/></svg><svg style="left:833px;top:792px" width="8" height="5"><path d="M.5 .5L4 4L7.5 .5" fill="none" stroke="#c5c5c5" stroke-width="1"/></svg><svg style="left:851px;top:794px" width="12" height="3"><circle cx="1.5" cy="1.5" r="1.1" fill="#c5c5c5"/><circle cx="6" cy="1.5" r="1.1" fill="#c5c5c5"/><circle cx="10.5" cy="1.5" r="1.1" fill="#c5c5c5"/></svg><svg style="left:873px;top:790px" width="10" height="6"><path d="M.5 5.5L5 1L9.5 5.5" fill="none" stroke="#c5c5c5" stroke-width="1.1"/></svg><svg style="left:895px;top:789px" width="10" height="10"><path d="M.5 .5L9.5 9.5M9.5 .5L.5 9.5" stroke="#c5c5c5" stroke-width="1.1"/></svg><div class="a t mono" style="left:16px;top:820.5px;font-size:10px;line-height:14px"><span style="color:#8f8f8f">16:36:08 </span><span style="color:#29b8db">[vite]</span><span style="color:#d4d4d4"> </span><span style="color:#23d18b">page reload</span><span style="color:#a0a0a0"> src/main.ts </span><span style="color:#f5f543">(x9)</span></div><div class="a " style="left:16px;top:833px;width:7px;height:15px;border:1px solid #cccccc"></div><div class="a " style="left:807px;top:818px;width:12px;height:195px;background:#1f1f1f;border-left:1px solid #2f2f2f"></div><div class="a " style="left:808px;top:951px;width:11px;height:62px;background:#424242"></div><div class="a " style="left:807px;top:818px;width:12px;height:1px;background:#4a4a4a"></div><div class="a " style="left:808px;top:818px;width:3px;height:3px;background:#5a5a5a"></div><div class="a " style="left:819px;top:810px;width:1px;height:203px;background:#3a3a3a"></div><div class="a " style="left:820px;top:826px;width:99px;height:18px;background:#37373d"></div><svg style="left:829px;top:810px" width="12" height="12"><rect x=".5" y=".5" width="11" height="11" rx="1" fill="none" stroke="#c5c5c5" stroke-width="1"/><path d="M3 3.5L5.5 6L3 8.5M6 9H9" fill="none" stroke="#c5c5c5" stroke-width="1"/></svg><div class="a t " style="left:845px;top:812px;font-size:11.5px;letter-spacing:-0.3px;color:#cccccc">powershell</div><svg style="left:828px;top:828px" width="14" height="14"><path d="M1.5 1.5L12.5 12.5M12.5 1.5L1.5 12.5" stroke="#c5c5c5" stroke-width="1.6"/><circle cx="3" cy="3" r="2" fill="none" stroke="#c5c5c5" stroke-width="1"/><circle cx="11" cy="11" r="2" fill="none" stroke="#c5c5c5" stroke-width="1"/></svg><div class="a t " style="left:845px;top:829px;font-size:11.5px;color:#e0e0e0">dev</div><div class="a t " style="left:866px;top:830px;font-size:10.5px;color:#9a9a9a">任务</div><svg style="left:897px;top:829px" width="10" height="12"><path d="M8 1.2A5 5 0 0 0 4 10.8" fill="none" stroke="#c5c5c5" stroke-width="1"/></svg><svg style="left:929px;top:45px" width="20" height="20"><path d="M6.5 4.5V1.6C6.5 1 7 .6 7.6.6H13.5L18.5 5.6V13.4C18.5 14 18 14.5 17.4 14.5H13.5" fill="none" stroke="#8a8a8a" stroke-width="1.2"/><path d="M13.5 .6V5.6H18.5" fill="none" stroke="#8a8a8a" stroke-width="1.2"/><path d="M1 5.6C1 5 1.5 4.5 2.1 4.5H11.4C12 4.5 12.5 5 12.5 5.6V18.4C12.5 19 12 19.5 11.4 19.5H2.1C1.5 19.5 1 19 1 18.4Z" fill="none" stroke="#8a8a8a" stroke-width="1.2"/></svg><svg style="left:929px;top:86px" width="20" height="20"><circle cx="12.3" cy="7.7" r="6.2" fill="none" stroke="#8a8a8a" stroke-width="1.3"/><path d="M7.8 12.2L1 19" stroke="#8a8a8a" stroke-width="1.5"/></svg><svg style="left:930px;top:125px" width="20" height="21"><circle cx="4" cy="3.5" r="2.6" fill="none" stroke="#8a8a8a" stroke-width="1.2"/><circle cx="4" cy="17" r="2.6" fill="none" stroke="#8a8a8a" stroke-width="1.2"/><circle cx="15" cy="7" r="2.6" fill="none" stroke="#8a8a8a" stroke-width="1.2"/><path d="M4 6.1V14.4M15 9.6C15 13 11 13 4 14.4" fill="none" stroke="#8a8a8a" stroke-width="1.2"/></svg><svg style="left:928px;top:164px" width="22" height="22"><path d="M8 1V14L20 7.5Z" fill="none" stroke="#8a8a8a" stroke-width="1.2"/><ellipse cx="6" cy="16" rx="3.2" ry="4" fill="none" stroke="#8a8a8a" stroke-width="1.2"/><path d="M1 14H3M1 18H3M9 14H11M9 18H11M6 12V20" stroke="#8a8a8a" stroke-width="1"/></svg><svg style="left:929px;top:205px" width="22" height="22"><path d="M1 6H8V13H15V20H1Z M1 13H8V20 M8 13V6" fill="none" stroke="#8a8a8a" stroke-width="1.2"/><rect x="12" y="1" width="7" height="7" fill="none" stroke="#8a8a8a" stroke-width="1.2"/></svg><div class="a" style="left:939.5px;top:215px;width:13px;height:13px;border-radius:7px;background:#0078d4;color:#fff;font-size:9px;font-weight:bold;line-height:13px;text-align:center">2</div><svg style="left:928px;top:942px" width="22" height="22"><circle cx="11" cy="11" r="10" fill="none" stroke="#8a8a8a" stroke-width="1.3"/><circle cx="11" cy="8.5" r="3.6" fill="none" stroke="#8a8a8a" stroke-width="1.4"/><path d="M4.5 17.5C5.5 13.8 16.5 13.8 17.5 17.5" fill="none" stroke="#8a8a8a" stroke-width="1.4"/></svg><svg style="left:928px;top:982px" width="22" height="22"><polygon points="17.99,9.26 20.68,9.47 20.68,12.53 17.99,12.74 17.17,14.71 18.93,16.76 16.76,18.93 14.71,17.17 12.74,17.99 12.53,20.68 9.47,20.68 9.26,17.99 7.29,17.17 5.24,18.93 3.07,16.76 4.83,14.71 4.01,12.74 1.32,12.53 1.32,9.47 4.01,9.26 4.83,7.29 3.07,5.24 5.24,3.07 7.29,4.83 9.26,4.01 9.47,1.32 12.53,1.32 12.74,4.01 14.71,4.83 16.76,3.07 18.93,5.24 17.17,7.29" fill="none" stroke="#8a8a8a" stroke-width="1.4" stroke-linejoin="round"/><circle cx="11" cy="11" r="2.4" fill="none" stroke="#8a8a8a" stroke-width="1.4"/></svg><div class="a" style="left:939px;top:993px;width:13px;height:13px;border-radius:7px;background:#0078d4;color:#fff;font-size:9px;font-weight:bold;line-height:13px;text-align:center">1</div><div class="a " style="left:0px;top:1013px;width:958px;height:18px;background:#007acc"></div><div class="a " style="left:0px;top:1013px;width:27px;height:18px;background:#16825d"></div><svg style="left:8px;top:1016px" width="12" height="12"><path d="M1 6.5L5 9.5L1 11.5M11 .5L7 3L11 5.5" fill="none" stroke="#fff" stroke-width="1.2"/></svg><svg style="left:34px;top:1016px" width="12" height="12"><circle cx="6" cy="6" r="5.2" fill="none" stroke="#fff" stroke-width="1.1"/><path d="M3.8 3.8L8.2 8.2M8.2 3.8L3.8 8.2" stroke="#fff" stroke-width="1.1"/></svg><div class="a t " style="left:48px;top:1017px;font-size:10.5px;letter-spacing:-0.3px;color:#ffffff">4</div><svg style="left:57px;top:1016px" width="12" height="12"><path d="M6 .8L11.3 11H.7Z" fill="none" stroke="#fff" stroke-width="1.1"/><path d="M6 4.5V8M6 9V10" stroke="#fff" stroke-width="1"/></svg><div class="a t " style="left:71px;top:1017px;font-size:10.5px;letter-spacing:-0.3px;color:#ffffff">0</div><svg style="left:90px;top:1016px" width="12" height="12"><path d="M1.5 1.5L10.5 10.5M10.5 1.5L1.5 10.5" stroke="#fff" stroke-width="1.6"/></svg><div class="a t " style="left:104px;top:1017px;font-size:10.5px;letter-spacing:-0.3px;color:#ffffff">1</div><svg style="left:124px;top:1016px" width="12" height="12"><path d="M6 5L3 11.5H9Z" fill="none" stroke="#fff" stroke-width="1.1"/><path d="M2.5 1.5A5 5 0 0 0 2.5 8.5M9.5 1.5A5 5 0 0 1 9.5 8.5" fill="none" stroke="#fff" stroke-width="1.1"/></svg><div class="a t " style="left:138px;top:1017px;font-size:10.5px;letter-spacing:-0.3px;color:#ffffff">0</div><div class="a t " style="left:156px;top:1017px;font-size:10.5px;letter-spacing:-0.3px;color:#ffffff">925 bytes</div><div class="a " style="left:440px;top:1013px;width:107px;height:18px;background:#0a3d6a"></div><div class="a t " style="left:449px;top:1017px;font-size:10.5px;letter-spacing:-0.3px;color:#ffffff">已为屏幕阅读器优化</div><div class="a t " style="left:553px;top:1017px;font-size:10.5px;letter-spacing:-0.3px;color:#ffffff">行 27，列 15</div><div class="a t " style="left:623px;top:1017px;font-size:10.5px;letter-spacing:-0.3px;color:#ffffff">空格: 2</div><div class="a t " style="left:667px;top:1017px;font-size:10.5px;letter-spacing:-0.3px;color:#ffffff">UTF-8</div><div class="a t " style="left:707px;top:1017px;font-size:10.5px;letter-spacing:-0.3px;color:#ffffff">CRLF</div><div class="a t " style="left:742px;top:1015.5px;font-size:10.5px;color:#fff;letter-spacing:1px">{}</div><div class="a t " style="left:756px;top:1017px;font-size:10.5px;letter-spacing:-0.3px;color:#ffffff">TypeScript</div><svg style="left:816px;top:1015px" width="11" height="13"><path d="M5.5 12V7M2.2 9A4.5 4.5 0 1 1 8.8 9" fill="none" stroke="#fff" stroke-width="1.1"/><circle cx="5.5" cy="5.5" r="1.5" fill="none" stroke="#fff"/></svg><div class="a t " style="left:830px;top:1017px;font-size:10.5px;letter-spacing:-0.3px;color:#ffffff">Go Live</div><svg style="left:874px;top:1017px" width="12" height="10"><path d="M.5 5L3.5 8.5L10 .5M5 8.5L11.5 .5" fill="none" stroke="#fff" stroke-width="1.1"/></svg><div class="a t " style="left:888px;top:1017px;font-size:10.5px;letter-spacing:-0.3px;color:#ffffff">Prettier</div><svg style="left:935px;top:1015px" width="12" height="13"><path d="M2 9.5V5.5A4 4 0 0 1 10 5.5V9.5L11 10.5H1Z M4.5 11.5A1.5 1.5 0 0 0 7.5 11.5" fill="none" stroke="#fff" stroke-width="1.1"/></svg><div class="a " style="left:0px;top:1031px;width:960px;height:1px;background:#5a5a5a"></div><div class="a " style="left:960px;top:0px;width:959px;height:1032px;background:#d3e3fd"></div><div class="a " style="left:958px;top:0px;width:961px;height:1px;background:#707070"></div><div class="a " style="left:1918px;top:0px;width:1px;height:1032px;background:#6e6e6e"></div><div class="a " style="left:966px;top:6px;width:28px;height:28px;background:#e8f0fe;border-radius:8px"></div><svg style="left:975px;top:17px" width="10" height="7"><path d="M1 1L5 5L9 1" fill="none" stroke="#1f1f1f" stroke-width="1.6"/></svg><svg style="left:992px;top:6px" width="248" height="35"><path d="M0 34 Q8 34 8 26 V8 Q8 0 16 0 H232 Q240 0 240 8 V26 Q240 34 248 34 Z" fill="#ffffff"/></svg><svg style="left:1009px;top:12px" width="15" height="16" viewBox="0 0 15 16"><circle cx="7" cy="7" r="7" fill="#d0101c"/><circle cx="7" cy="7" r="5.6" fill="none" stroke="#f08a90" stroke-width=".5" stroke-dasharray="1 1.2" opacity=".7"/><path d="M3.8 11V6.6Q3.8 5 5.4 5H8.6Q10.2 5 10.2 6.6V11Z" fill="#ffffff"/><circle cx="7" cy="7.6" r="1" fill="#d0101c"/><path d="M1.5 16L7 8.3L12.5 16Z" fill="#a9adad"/><rect x="1" y="13.6" width="12" height="2.4" fill="#6e7070"/><path d="M3 14.2H5M6 14.2H8M9 14.2H11" stroke="#b8b8b8" stroke-width=".6"/></svg><div class="a" style="left:1032px;top:11px;width:172px;height:20px;overflow:hidden;-webkit-mask-image:linear-gradient(90deg,#000 80%,transparent)"><div class="a t" style="left:0;top:3.5px;font-size:12px;color:#262626">郴州钨特种钨基新材料粉末智能化生产</div></div><svg style="left:1211px;top:15px" width="10" height="10"><path d="M1 1L9 9M9 1L1 9" stroke="#1f1f1f" stroke-width="1.5"/></svg><svg style="left:1246.5px;top:14.5px" width="11" height="11"><path d="M5.5 0V11M0 5.5H11" stroke="#1f1f1f" stroke-width="1.5"/></svg><svg style="left:1799px;top:19px" width="12" height="2"><path d="M0 1H11" stroke="#1f1f1f" stroke-width="1.1"/></svg><svg style="left:1843px;top:14px" width="11" height="11"><rect x=".6" y=".6" width="9.8" height="9.8" rx="1" fill="none" stroke="#1f1f1f" stroke-width="1.2"/></svg><svg style="left:1889px;top:14px" width="12" height="12"><path d="M1 1L11 11M11 1L1 11" stroke="#1f1f1f" stroke-width="1.1"/></svg><div class="a " style="left:960px;top:40px;width:958px;height:81px;background:#ffffff;border-radius:8px 8px 0 0"></div><div class="a " style="left:960px;top:50px;width:10px;height:71px;background:#ffffff"></div><svg style="left:975px;top:56px" width="14" height="14"><path d="M13 7H1.5M7 1.3L1.3 7L7 12.7" fill="none" stroke="#9a9a9a" stroke-width="1.5"/></svg><svg style="left:1011px;top:56px" width="14" height="14"><path d="M1 7H12.5M7 1.3L12.7 7L7 12.7" fill="none" stroke="#9a9a9a" stroke-width="1.5"/></svg><svg style="left:1046px;top:55px" width="15" height="15"><path d="M12.6 7.5A5.3 5.3 0 1 1 10.9 3.6" fill="none" stroke="#474747" stroke-width="1.7"/><path d="M8.5 1.2H13.2V5.9Z" fill="#474747"/></svg><div class="a " style="left:1080px;top:46px;width:642px;height:34px;background:#e9eef6;border-radius:17px"></div><div class="a " style="left:1085px;top:51.5px;width:24px;height:23px;background:#ffffff;border-radius:12px"></div><svg style="left:1090px;top:56px" width="14" height="14"><circle cx="7" cy="7" r="6" fill="none" stroke="#1f1f1f" stroke-width="1.4"/><path d="M7 6V10.5M7 3.5V4.8" stroke="#1f1f1f" stroke-width="1.6"/></svg><div class="a t " style="left:1117px;top:54.5px;font-size:15px;color:#1f1f1f;letter-spacing:0.3px">localhost:81/#/</div><svg style="left:1657px;top:54px" width="18" height="18"><rect x=".5" y=".5" width="11" height="12" rx="1" fill="#5f6368"/><text x="2.2" y="10" font-size="8" font-weight="bold" fill="#fff" font-family="Liberation Sans">G</text><rect x="6" y="5" width="11" height="12" rx="1" fill="#fff" stroke="#5f6368" stroke-width="1.2"/><text x="8.5" y="14.5" font-size="8" fill="#5f6368" font-family="Liberation Sans">文</text></svg><svg style="left:1690px;top:55px" width="16" height="16"><path d="M8 1.2L10 5.8L15 6.3L11.2 9.6L12.3 14.6L8 12L3.7 14.6L4.8 9.6L1 6.3L6 5.8Z" fill="none" stroke="#474747" stroke-width="1.5" stroke-linejoin="round"/></svg><svg style="left:1740px;top:54px" width="18" height="18"><path d="M1.5 5.5H5.5V4A2.2 2.2 0 0 1 9.9 4V5.5H13.5V8.3H14.2A2.2 2.2 0 0 1 14.2 12.7H13.5V16.5H1.5Z" fill="none" stroke="#474747" stroke-width="1.7" stroke-linejoin="round"/></svg><div class="a " style="left:1774px;top:55px;width:1.5px;height:17px;background:#c4d4ef"></div><div class="a " style="left:1792px;top:53px;width:20px;height:20px;background:#d3e3fd;border-radius:10px"></div><svg style="left:1795px;top:56px" width="14" height="14"><circle cx="7" cy="4.5" r="3.2" fill="#0b57d0"/><path d="M1.5 12.5C2 8.5 12 8.5 12.5 12.5Z" fill="#0b57d0"/></svg><div class="a " style="left:1824px;top:46px;width:88px;height:34px;background:#d3e3fd;border-radius:17px"></div><div class="a t " style="left:1836px;top:56.5px;font-size:12px;color:#1f1f1f">完成更新</div><svg style="left:1894px;top:55px" width="4" height="16"><circle cx="2" cy="2.5" r="1.7" fill="#1f1f1f"/><circle cx="2" cy="8" r="1.7" fill="#1f1f1f"/><circle cx="2" cy="13.5" r="1.7" fill="#1f1f1f"/></svg><svg style="left:979px;top:93px" width="15" height="15"><rect x="1" y="1" width="4.5" height="4.5" fill="none" stroke="#474747" stroke-width="1.6"/><rect x="9.5" y="1" width="4.5" height="4.5" fill="none" stroke="#474747" stroke-width="1.6"/><rect x="1" y="9.5" width="4.5" height="4.5" fill="none" stroke="#474747" stroke-width="1.6"/><rect x="9.5" y="9.5" width="4.5" height="4.5" fill="none" stroke="#474747" stroke-width="1.6"/></svg><div class="a " style="left:1008px;top:93px;width:1.5px;height:15px;background:#c4d4ef"></div><svg style="left:1026px;top:94.5px" width="17" height="14"><path d="M1 1.5H6L8 3.5H15.5V12.5H1Z" fill="none" stroke="#474747" stroke-width="1.5" stroke-linejoin="round"/></svg><div class="a t " style="left:1050px;top:95px;font-size:12px;color:#3c3c3c">项目</div><svg style="left:1092px;top:94.5px" width="17" height="14"><path d="M1 1.5H6L8 3.5H15.5V12.5H1Z" fill="none" stroke="#474747" stroke-width="1.5" stroke-linejoin="round"/></svg><div class="a t " style="left:1116px;top:95px;font-size:12px;color:#3c3c3c">技能</div><svg style="left:1158px;top:94.5px" width="17" height="14"><path d="M1 1.5H6L8 3.5H15.5V12.5H1Z" fill="none" stroke="#474747" stroke-width="1.5" stroke-linejoin="round"/></svg><div class="a t " style="left:1182px;top:95px;font-size:12px;color:#3c3c3c">学习</div><svg style="left:1224px;top:94.5px" width="17" height="14"><path d="M1 1.5H6L8 3.5H15.5V12.5H1Z" fill="none" stroke="#474747" stroke-width="1.5" stroke-linejoin="round"/></svg><div class="a t " style="left:1248px;top:95px;font-size:12px;color:#3c3c3c">工具</div><svg style="left:1290px;top:94.5px" width="17" height="14"><path d="M1 1.5H6L8 3.5H15.5V12.5H1Z" fill="none" stroke="#474747" stroke-width="1.5" stroke-linejoin="round"/></svg><div class="a t " style="left:1314px;top:95px;font-size:12px;color:#3c3c3c">娱乐</div><svg style="left:1356px;top:94.5px" width="17" height="14"><path d="M1 1.5H6L8 3.5H15.5V12.5H1Z" fill="none" stroke="#474747" stroke-width="1.5" stroke-linejoin="round"/></svg><div class="a t " style="left:1380px;top:95px;font-size:12px;color:#3c3c3c">文档</div><svg style="left:1422px;top:94.5px" width="17" height="14"><path d="M1 1.5H6L8 3.5H15.5V12.5H1Z" fill="none" stroke="#474747" stroke-width="1.5" stroke-linejoin="round"/></svg><div class="a t " style="left:1446px;top:95px;font-size:12px;color:#3c3c3c">个人项目</div><svg style="left:1511px;top:93px" width="16" height="16"><circle cx="8" cy="8" r="7.2" fill="#5f6368"/><path d="M3 4C5 5 6 7 5 9C7 10 7 12 6.5 14.5M9 1.5C9 3.5 11 4.5 13 4.5M10 9C11.5 9 13 10 14 12" fill="none" stroke="#fff" stroke-width="1.6"/></svg><svg style="left:1544px;top:94.5px" width="17" height="14"><path d="M1 1.5H6L8 3.5H15.5V12.5H1Z" fill="none" stroke="#474747" stroke-width="1.5" stroke-linejoin="round"/></svg><div class="a t " style="left:1568px;top:95px;font-size:12px;color:#3c3c3c">java</div><svg style="left:1609px;top:94.5px" width="17" height="14"><path d="M1 1.5H6L8 3.5H15.5V12.5H1Z" fill="none" stroke="#474747" stroke-width="1.5" stroke-linejoin="round"/></svg><div class="a t " style="left:1634px;top:95px;font-size:12px;color:#3c3c3c">公司项目</div><div class="a" style="left:1697px;top:92px;width:16px;height:16px;border-radius:3px;background:#1aad6f;color:#fff;font-size:12px;font-weight:bold;line-height:16px;text-align:center">安</div><div class="a" style="left:960px;top:121px;width:958px;height:910px;overflow:hidden;background:#050a12"><div class="a" style="left:22.40px;top:0.00px;width:1.00px;height:910.00px;background:#040d1b"></div><div class="a" style="left:44.89px;top:0.00px;width:1.00px;height:910.00px;background:#040d1b"></div><div class="a" style="left:67.38px;top:0.00px;width:1.00px;height:910.00px;background:#040d1b"></div><div class="a" style="left:89.87px;top:0.00px;width:1.00px;height:910.00px;background:#040d1b"></div><div class="a" style="left:112.36px;top:0.00px;width:1.00px;height:910.00px;background:#040d1b"></div><div class="a" style="left:134.85px;top:0.00px;width:1.00px;height:910.00px;background:#040d1b"></div><div class="a" style="left:157.34px;top:0.00px;width:1.00px;height:910.00px;background:#040d1b"></div><div class="a" style="left:179.83px;top:0.00px;width:1.00px;height:910.00px;background:#040d1b"></div><div class="a" style="left:202.32px;top:0.00px;width:1.00px;height:910.00px;background:#040d1b"></div><div class="a" style="left:224.81px;top:0.00px;width:1.00px;height:910.00px;background:#040d1b"></div><div class="a" style="left:247.30px;top:0.00px;width:1.00px;height:910.00px;background:#040d1b"></div><div class="a" style="left:269.79px;top:0.00px;width:1.00px;height:910.00px;background:#040d1b"></div><div class="a" style="left:292.28px;top:0.00px;width:1.00px;height:910.00px;background:#040d1b"></div><div class="a" style="left:314.77px;top:0.00px;width:1.00px;height:910.00px;background:#040d1b"></div><div class="a" style="left:337.26px;top:0.00px;width:1.00px;height:910.00px;background:#040d1b"></div><div class="a" style="left:359.75px;top:0.00px;width:1.00px;height:910.00px;background:#040d1b"></div><div class="a" style="left:382.24px;top:0.00px;width:1.00px;height:910.00px;background:#040d1b"></div><div class="a" style="left:404.73px;top:0.00px;width:1.00px;height:910.00px;background:#040d1b"></div><div class="a" style="left:427.22px;top:0.00px;width:1.00px;height:910.00px;background:#040d1b"></div><div class="a" style="left:449.71px;top:0.00px;width:1.00px;height:910.00px;background:#040d1b"></div><div class="a" style="left:472.20px;top:0.00px;width:1.00px;height:910.00px;background:#040d1b"></div><div class="a" style="left:494.69px;top:0.00px;width:1.00px;height:910.00px;background:#040d1b"></div><div class="a" style="left:517.18px;top:0.00px;width:1.00px;height:910.00px;background:#040d1b"></div><div class="a" style="left:539.67px;top:0.00px;width:1.00px;height:910.00px;background:#040d1b"></div><div class="a" style="left:562.16px;top:0.00px;width:1.00px;height:910.00px;background:#040d1b"></div><div class="a" style="left:584.65px;top:0.00px;width:1.00px;height:910.00px;background:#040d1b"></div><div class="a" style="left:607.14px;top:0.00px;width:1.00px;height:910.00px;background:#040d1b"></div><div class="a" style="left:629.63px;top:0.00px;width:1.00px;height:910.00px;background:#040d1b"></div><div class="a" style="left:652.12px;top:0.00px;width:1.00px;height:910.00px;background:#040d1b"></div><div class="a" style="left:674.61px;top:0.00px;width:1.00px;height:910.00px;background:#040d1b"></div><div class="a" style="left:697.10px;top:0.00px;width:1.00px;height:910.00px;background:#040d1b"></div><div class="a" style="left:719.59px;top:0.00px;width:1.00px;height:910.00px;background:#040d1b"></div><div class="a" style="left:742.08px;top:0.00px;width:1.00px;height:910.00px;background:#040d1b"></div><div class="a" style="left:764.57px;top:0.00px;width:1.00px;height:910.00px;background:#040d1b"></div><div class="a" style="left:787.06px;top:0.00px;width:1.00px;height:910.00px;background:#040d1b"></div><div class="a" style="left:809.55px;top:0.00px;width:1.00px;height:910.00px;background:#040d1b"></div><div class="a" style="left:832.04px;top:0.00px;width:1.00px;height:910.00px;background:#040d1b"></div><div class="a" style="left:854.53px;top:0.00px;width:1.00px;height:910.00px;background:#040d1b"></div><div class="a" style="left:877.02px;top:0.00px;width:1.00px;height:910.00px;background:#040d1b"></div><div class="a" style="left:899.51px;top:0.00px;width:1.00px;height:910.00px;background:#040d1b"></div><div class="a" style="left:922.00px;top:0.00px;width:1.00px;height:910.00px;background:#040d1b"></div><div class="a" style="left:944.49px;top:0.00px;width:1.00px;height:910.00px;background:#040d1b"></div><div class="a" style="left:0.00px;top:37.20px;width:958.00px;height:1.50px;background:#05112a;opacity:.8"></div><div class="a" style="left:0.00px;top:75.20px;width:958.00px;height:1.50px;background:#05112a;opacity:.8"></div><div class="a" style="left:0.00px;top:113.20px;width:958.00px;height:1.50px;background:#05112a;opacity:.8"></div><div class="a" style="left:0.00px;top:151.20px;width:958.00px;height:1.50px;background:#05112a;opacity:.8"></div><div class="a" style="left:0.00px;top:189.20px;width:958.00px;height:1.50px;background:#05112a;opacity:.8"></div><div class="a" style="left:0.00px;top:227.20px;width:958.00px;height:1.50px;background:#05112a;opacity:.8"></div><div class="a" style="left:0.00px;top:265.20px;width:958.00px;height:1.50px;background:#05112a;opacity:.8"></div><div class="a" style="left:0.00px;top:303.20px;width:958.00px;height:1.50px;background:#05112a;opacity:.8"></div><div class="a" style="left:0.00px;top:341.20px;width:958.00px;height:1.50px;background:#05112a;opacity:.8"></div><div class="a" style="left:0.00px;top:379.20px;width:958.00px;height:1.50px;background:#05112a;opacity:.8"></div><div class="a" style="left:0.00px;top:417.20px;width:958.00px;height:1.50px;background:#05112a;opacity:.8"></div><div class="a" style="left:0.00px;top:455.20px;width:958.00px;height:1.50px;background:#05112a;opacity:.8"></div><div class="a" style="left:0.00px;top:493.20px;width:958.00px;height:1.50px;background:#05112a;opacity:.8"></div><div class="a" style="left:0.00px;top:531.20px;width:958.00px;height:1.50px;background:#05112a;opacity:.8"></div><div class="a" style="left:0.00px;top:569.20px;width:958.00px;height:1.50px;background:#05112a;opacity:.8"></div><div class="a" style="left:0.00px;top:607.20px;width:958.00px;height:1.50px;background:#05112a;opacity:.8"></div><div class="a" style="left:0.00px;top:645.20px;width:958.00px;height:1.50px;background:#05112a;opacity:.8"></div><div class="a" style="left:0.00px;top:683.20px;width:958.00px;height:1.50px;background:#05112a;opacity:.8"></div><div class="a" style="left:0.00px;top:721.20px;width:958.00px;height:1.50px;background:#05112a;opacity:.8"></div><div class="a" style="left:0.00px;top:759.20px;width:958.00px;height:1.50px;background:#05112a;opacity:.8"></div><div class="a" style="left:0.00px;top:797.20px;width:958.00px;height:1.50px;background:#05112a;opacity:.8"></div><div class="a" style="left:0.00px;top:835.20px;width:958.00px;height:1.50px;background:#05112a;opacity:.8"></div><div class="a" style="left:0.00px;top:873.20px;width:958.00px;height:1.50px;background:#05112a;opacity:.8"></div><div class="a" style="left:0;top:0;width:958px;height:910px;background:radial-gradient(ellipse 75% 80% at 52% 58%,rgba(0,0,0,0) 35%,rgba(0,0,0,.55) 100%)"></div><div class="a" style="left:920px;top:0;width:78px;height:910px;background:linear-gradient(90deg,rgba(0,0,0,0),rgba(0,0,0,.6))"></div><div class="a t" style="left:33.50px;top:96.50px;width:600px;text-align:left;font-size:19.5px;color:#0d6efd;font-weight:900;letter-spacing:4.5px;transform:scale(0.5,0.843);transform-origin:0 0;">钨粉合批</div><div class="a t" style="left:33.50px;top:577.50px;width:600px;text-align:left;font-size:18.5px;color:#0d6efd;font-weight:900;letter-spacing:6px;transform:scale(0.5,0.843);transform-origin:0 0;">待执行任务</div><div class="a" style="left:0px;top:125px;width:230px;height:420px;overflow:hidden"><div class="a" style="left:13px;top:-66px;width:200px;height:72px;border-radius:2px;background:linear-gradient(90deg,#0c2150 0%,#0a1d45 40%,rgba(8,22,50,.5) 75%,rgba(5,12,28,0) 100%)"></div><div class="a" style="left:13px;top:15px;width:200px;height:72px;border-radius:2px;background:linear-gradient(90deg,#0c2150 0%,#0a1d45 40%,rgba(8,22,50,.5) 75%,rgba(5,12,28,0) 100%)"></div><svg style="left:15px;top:29px" width="35" height="45" viewBox="0 0 35 45"><defs><linearGradient id="bg{i}" x1="0" y1="0" x2="0" y2="1"><stop offset="0" stop-color="#f4f8ff"/><stop offset=".3" stop-color="#b8ccf4"/><stop offset="1" stop-color="#5a7ed0" stop-opacity=".5"/></linearGradient><radialGradient id="rg{i}" cx=".5" cy=".5" r=".5"><stop offset="0" stop-color="#ffffff"/><stop offset=".25" stop-color="#3fb8ff"/><stop offset="1" stop-color="#0a5fd8" stop-opacity="0"/></radialGradient></defs><ellipse cx="17.5" cy="21" rx="12" ry="16" fill="#1a4fb8" opacity=".25"/><rect x="12" y="9" width="11" height="18.5" rx="1.5" fill="url(#bg{i})" opacity=".9"/><rect x="15.5" y="7.5" width="4" height="2" fill="#e8f0ff"/><path d="M16 15H19L18.2 26H16.8Z" fill="#1a3f9a" opacity=".55"/><path d="M13.5 19L15.5 23V26H13.5Z M21.5 19L19.5 23V26H21.5Z" fill="#0d2a7a" opacity=".6"/><ellipse cx="17.5" cy="35" rx="10.5" ry="3.2" fill="#020a24" opacity=".75"/><path d="M7 30.5Q17.5 37 28 30Q27 34.5 17.5 34.5Q8 34.5 7 30.5Z" fill="#1a8fff"/><ellipse cx="17.5" cy="32.3" rx="4" ry="2.2" fill="url(#rg{i})"/></svg><div class="a t" style="left:54.5px;top:26.50px;font-size:18.3px;color:#ffffff;font-weight:bold;transform:scale(0.5,0.74);transform-origin:0 0">常规生产订单|20FW20-2</div><div class="a t" style="left:54.5px;top:50.50px;font-size:12px;color:#8797b0;transform:scale(0.5,0.843);transform-origin:0 0">生产订单号：106_SCDD20240701004</div><div class="a t" style="left:54.5px;top:67.00px;font-size:12px;color:#8797b0;transform:scale(0.5,0.843);transform-origin:0 0">订单数量：10000</div><div class="a" style="left:13px;top:96px;width:200px;height:72px;border-radius:2px;background:linear-gradient(90deg,#0c2150 0%,#0a1d45 40%,rgba(8,22,50,.5) 75%,rgba(5,12,28,0) 100%)"></div><svg style="left:15px;top:110px" width="35" height="45" viewBox="0 0 35 45"><defs><linearGradient id="bg{i}" x1="0" y1="0" x2="0" y2="1"><stop offset="0" stop-color="#f4f8ff"/><stop offset=".3" stop-color="#b8ccf4"/><stop offset="1" stop-color="#5a7ed0" stop-opacity=".5"/></linearGradient><radialGradient id="rg{i}" cx=".5" cy=".5" r=".5"><stop offset="0" stop-color="#ffffff"/><stop offset=".25" stop-color="#3fb8ff"/><stop offset="1" stop-color="#0a5fd8" stop-opacity="0"/></radialGradient></defs><ellipse cx="17.5" cy="21" rx="12" ry="16" fill="#1a4fb8" opacity=".25"/><rect x="12" y="9" width="11" height="18.5" rx="1.5" fill="url(#bg{i})" opacity=".9"/><rect x="15.5" y="7.5" width="4" height="2" fill="#e8f0ff"/><path d="M16 15H19L18.2 26H16.8Z" fill="#1a3f9a" opacity=".55"/><path d="M13.5 19L15.5 23V26H13.5Z M21.5 19L19.5 23V26H21.5Z" fill="#0d2a7a" opacity=".6"/><ellipse cx="17.5" cy="35" rx="10.5" ry="3.2" fill="#020a24" opacity=".75"/><path d="M7 30.5Q17.5 37 28 30Q27 34.5 17.5 34.5Q8 34.5 7 30.5Z" fill="#1a8fff"/><ellipse cx="17.5" cy="32.3" rx="4" ry="2.2" fill="url(#rg{i})"/></svg><div class="a t" style="left:54.5px;top:107.50px;font-size:18.3px;color:#ffffff;font-weight:bold;transform:scale(0.5,0.74);transform-origin:0 0">常规生产订单|WC15</div><div class="a t" style="left:54.5px;top:131.50px;font-size:12px;color:#8797b0;transform:scale(0.5,0.843);transform-origin:0 0">生产订单号：106_SCDD20240701005</div><div class="a t" style="left:54.5px;top:148.00px;font-size:12px;color:#8797b0;transform:scale(0.5,0.843);transform-origin:0 0">订单数量：10000</div><div class="a" style="left:13px;top:177px;width:200px;height:72px;border-radius:2px;background:linear-gradient(90deg,#0c2150 0%,#0a1d45 40%,rgba(8,22,50,.5) 75%,rgba(5,12,28,0) 100%)"></div><svg style="left:15px;top:191px" width="35" height="45" viewBox="0 0 35 45"><defs><linearGradient id="bg{i}" x1="0" y1="0" x2="0" y2="1"><stop offset="0" stop-color="#f4f8ff"/><stop offset=".3" stop-color="#b8ccf4"/><stop offset="1" stop-color="#5a7ed0" stop-opacity=".5"/></linearGradient><radialGradient id="rg{i}" cx=".5" cy=".5" r=".5"><stop offset="0" stop-color="#ffffff"/><stop offset=".25" stop-color="#3fb8ff"/><stop offset="1" stop-color="#0a5fd8" stop-opacity="0"/></radialGradient></defs><ellipse cx="17.5" cy="21" rx="12" ry="16" fill="#1a4fb8" opacity=".25"/><rect x="12" y="9" width="11" height="18.5" rx="1.5" fill="url(#bg{i})" opacity=".9"/><rect x="15.5" y="7.5" width="4" height="2" fill="#e8f0ff"/><path d="M16 15H19L18.2 26H16.8Z" fill="#1a3f9a" opacity=".55"/><path d="M13.5 19L15.5 23V26H13.5Z M21.5 19L19.5 23V26H21.5Z" fill="#0d2a7a" opacity=".6"/><ellipse cx="17.5" cy="35" rx="10.5" ry="3.2" fill="#020a24" opacity=".75"/><path d="M7 30.5Q17.5 37 28 30Q27 34.5 17.5 34.5Q8 34.5 7 30.5Z" fill="#1a8fff"/><ellipse cx="17.5" cy="32.3" rx="4" ry="2.2" fill="url(#rg{i})"/></svg><div class="a t" style="left:54.5px;top:188.50px;font-size:18.3px;color:#ffffff;font-weight:bold;transform:scale(0.5,0.74);transform-origin:0 0">常规生产订单|40FW40</div><div class="a t" style="left:54.5px;top:212.50px;font-size:12px;color:#8797b0;transform:scale(0.5,0.843);transform-origin:0 0">生产订单号：106_SCDD20240704001</div><div class="a t" style="left:54.5px;top:229.00px;font-size:12px;color:#8797b0;transform:scale(0.5,0.843);transform-origin:0 0">订单数量：25000</div><div class="a" style="left:13px;top:258px;width:200px;height:72px;border-radius:2px;background:linear-gradient(90deg,#0c2150 0%,#0a1d45 40%,rgba(8,22,50,.5) 75%,rgba(5,12,28,0) 100%)"></div><svg style="left:15px;top:272px" width="35" height="45" viewBox="0 0 35 45"><defs><linearGradient id="bg{i}" x1="0" y1="0" x2="0" y2="1"><stop offset="0" stop-color="#f4f8ff"/><stop offset=".3" stop-color="#b8ccf4"/><stop offset="1" stop-color="#5a7ed0" stop-opacity=".5"/></linearGradient><radialGradient id="rg{i}" cx=".5" cy=".5" r=".5"><stop offset="0" stop-color="#ffffff"/><stop offset=".25" stop-color="#3fb8ff"/><stop offset="1" stop-color="#0a5fd8" stop-opacity="0"/></radialGradient></defs><ellipse cx="17.5" cy="21" rx="12" ry="16" fill="#1a4fb8" opacity=".25"/><rect x="12" y="9" width="11" height="18.5" rx="1.5" fill="url(#bg{i})" opacity=".9"/><rect x="15.5" y="7.5" width="4" height="2" fill="#e8f0ff"/><path d="M16 15H19L18.2 26H16.8Z" fill="#1a3f9a" opacity=".55"/><path d="M13.5 19L15.5 23V26H13.5Z M21.5 19L19.5 23V26H21.5Z" fill="#0d2a7a" opacity=".6"/><ellipse cx="17.5" cy="35" rx="10.5" ry="3.2" fill="#020a24" opacity=".75"/><path d="M7 30.5Q17.5 37 28 30Q27 34.5 17.5 34.5Q8 34.5 7 30.5Z" fill="#1a8fff"/><ellipse cx="17.5" cy="32.3" rx="4" ry="2.2" fill="url(#rg{i})"/></svg><div class="a t" style="left:54.5px;top:269.50px;font-size:18.3px;color:#ffffff;font-weight:bold;transform:scale(0.5,0.74);transform-origin:0 0">常规生产订单|10FW10</div><div class="a t" style="left:54.5px;top:293.50px;font-size:12px;color:#8797b0;transform:scale(0.5,0.843);transform-origin:0 0">生产订单号：106_SCDD20240705001</div><div class="a t" style="left:54.5px;top:310.00px;font-size:12px;color:#8797b0;transform:scale(0.5,0.843);transform-origin:0 0">订单数量：5000</div><div class="a" style="left:13px;top:339px;width:200px;height:72px;border-radius:2px;background:linear-gradient(90deg,#0c2150 0%,#0a1d45 40%,rgba(8,22,50,.5) 75%,rgba(5,12,28,0) 100%)"></div><svg style="left:15px;top:353px" width="35" height="45" viewBox="0 0 35 45"><defs><linearGradient id="bg{i}" x1="0" y1="0" x2="0" y2="1"><stop offset="0" stop-color="#f4f8ff"/><stop offset=".3" stop-color="#b8ccf4"/><stop offset="1" stop-color="#5a7ed0" stop-opacity=".5"/></linearGradient><radialGradient id="rg{i}" cx=".5" cy=".5" r=".5"><stop offset="0" stop-color="#ffffff"/><stop offset=".25" stop-color="#3fb8ff"/><stop offset="1" stop-color="#0a5fd8" stop-opacity="0"/></radialGradient></defs><ellipse cx="17.5" cy="21" rx="12" ry="16" fill="#1a4fb8" opacity=".25"/><rect x="12" y="9" width="11" height="18.5" rx="1.5" fill="url(#bg{i})" opacity=".9"/><rect x="15.5" y="7.5" width="4" height="2" fill="#e8f0ff"/><path d="M16 15H19L18.2 26H16.8Z" fill="#1a3f9a" opacity=".55"/><path d="M13.5 19L15.5 23V26H13.5Z M21.5 19L19.5 23V26H21.5Z" fill="#0d2a7a" opacity=".6"/><ellipse cx="17.5" cy="35" rx="10.5" ry="3.2" fill="#020a24" opacity=".75"/><path d="M7 30.5Q17.5 37 28 30Q27 34.5 17.5 34.5Q8 34.5 7 30.5Z" fill="#1a8fff"/><ellipse cx="17.5" cy="32.3" rx="4" ry="2.2" fill="url(#rg{i})"/></svg><div class="a t" style="left:54.5px;top:350.50px;font-size:18.3px;color:#ffffff;font-weight:bold;transform:scale(0.5,0.74);transform-origin:0 0">常规生产订单|15FW15</div><div class="a t" style="left:54.5px;top:374.50px;font-size:12px;color:#8797b0;transform:scale(0.5,0.843);transform-origin:0 0">生产订单号：106_SCDD20240709001</div><div class="a t" style="left:54.5px;top:391.00px;font-size:12px;color:#8797b0;transform:scale(0.5,0.843);transform-origin:0 0">订单数量：2000</div></div><svg style="left:14px;top:616.50px;overflow:visible" width="15" height="12"><g fill="#f5c400" style="filter:drop-shadow(0 0 2px #ffb000)"><path d="M1 1L6 6L1 11H4L9 6L4 1Z"/><path d="M7 1L12 6L7 11H10L15 6L10 1Z"/></g></svg><div class="a t" style="left:28.50px;top:616.30px;width:600px;text-align:left;font-size:14px;color:#f0f2f5;font-weight:500;letter-spacing:0px;transform:scale(0.5,0.843);transform-origin:0 0;">【钼丝碳化炉2#】 即将进行 【切换订单】 操作。</div><svg style="left:14px;top:665.57px;overflow:visible" width="15" height="12"><g fill="#f5c400" style="filter:drop-shadow(0 0 2px #ffb000)"><path d="M1 1L6 6L1 11H4L9 6L4 1Z"/><path d="M7 1L12 6L7 11H10L15 6L10 1Z"/></g></svg><div class="a t" style="left:28.50px;top:665.37px;width:600px;text-align:left;font-size:14px;color:#f0f2f5;font-weight:500;letter-spacing:0px;transform:scale(0.5,0.843);transform-origin:0 0;">【钼丝碳化炉3#】 即将进行 【切换订单】 操作。</div><svg style="left:14px;top:714.64px;overflow:visible" width="15" height="12"><g fill="#f5c400" style="filter:drop-shadow(0 0 2px #ffb000)"><path d="M1 1L6 6L1 11H4L9 6L4 1Z"/><path d="M7 1L12 6L7 11H10L15 6L10 1Z"/></g></svg><div class="a t" style="left:28.50px;top:714.44px;width:600px;text-align:left;font-size:14px;color:#f0f2f5;font-weight:500;letter-spacing:0px;transform:scale(0.5,0.843);transform-origin:0 0;">【方管碳化炉4#】 即将进行 【切换订单】 操作。</div><svg style="left:14px;top:763.71px;overflow:visible" width="15" height="12"><g fill="#f5c400" style="filter:drop-shadow(0 0 2px #ffb000)"><path d="M1 1L6 6L1 11H4L9 6L4 1Z"/><path d="M7 1L12 6L7 11H10L15 6L10 1Z"/></g></svg><div class="a t" style="left:28.50px;top:763.51px;width:600px;text-align:left;font-size:14px;color:#f0f2f5;font-weight:500;letter-spacing:0px;transform:scale(0.5,0.843);transform-origin:0 0;">【方管碳化炉5#】 即将进行 【切换订单】 操作。</div><div class="a t" style="left:349.50px;top:92.50px;width:460px;text-align:center;font-size:23.5px;color:#0d6efd;font-weight:900;letter-spacing:6px;transform:scale(0.5,0.843);transform-origin:0 0;">生产设备实时监控</div><div class="a" style="left:230.00px;top:125.00px;width:471.00px;height:205.00px;background:rgba(8,16,28,.55);border:1px solid #0a1e3e;border-top:none;"></div><div class="a" style="left:231.50px;top:125.00px;width:99px;height:205.00px;overflow:hidden"><div class="a" style="left:12.0px;top:-7.00px;width:75px;height:150.00px;background:linear-gradient(180deg,#1450b8 0%,#0c3080 12%,#0b2b6e 50%,#0a2458 100%)"></div><div class="a" style="left:12.0px;top:30.00px;width:75px;height:70px;background:radial-gradient(ellipse at 50% 45%,rgba(30,90,190,.25),rgba(0,0,0,0) 65%)"></div><div class="a" style="left:12.0px;top:124.00px;width:75px;height:38px;border-radius:50%;background:linear-gradient(180deg,#10c4f4 0%,#0a86c8 45%,#0b3f8a 100%)"></div><div class="a" style="left:12.0px;top:-26.00px;width:75px;height:38px;border-radius:50%;background:linear-gradient(180deg,#55b0e0 0%,#6ad8c8 50%,#7ef2b0 100%);box-shadow:0 2px 8px 1px rgba(20,170,255,.75)"></div></div><div class="a t" style="left:231.00px;top:180.00px;width:200px;text-align:center;font-size:26px;color:#1fcbe6;font-weight:normal;letter-spacing:0px;transform:scale(0.5,0.843);transform-origin:0 0;">80.00%</div><div class="a" style="left:600.00px;top:125.00px;width:99px;height:205.00px;overflow:hidden"><div class="a" style="left:12px;top:-7.00px;width:75px;height:150.00px;background:linear-gradient(180deg,#1450b8 0%,#0c3080 12%,#0b2b6e 50%,#0a2458 100%)"></div><div class="a" style="left:12px;top:30.00px;width:75px;height:70px;background:radial-gradient(ellipse at 50% 45%,rgba(30,90,190,.25),rgba(0,0,0,0) 65%)"></div><div class="a" style="left:12px;top:124.00px;width:75px;height:38px;border-radius:50%;background:linear-gradient(180deg,#10c4f4 0%,#0a86c8 45%,#0b3f8a 100%)"></div><div class="a" style="left:12px;top:-26.00px;width:75px;height:38px;border-radius:50%;background:linear-gradient(180deg,#55b0e0 0%,#6ad8c8 50%,#7ef2b0 100%);box-shadow:0 2px 8px 1px rgba(20,170,255,.75)"></div></div><div class="a t" style="left:599.50px;top:180.00px;width:200px;text-align:center;font-size:26px;color:#1fcbe6;font-weight:normal;letter-spacing:0px;transform:scale(0.5,0.843);transform-origin:0 0;">78.93%</div><div class="a" style="left:354.50px;top:138.40px;width:221.00px;height:1.00px;background:#45474f"></div><div class="a" style="left:350.50px;top:138.40px;width:4.00px;height:1.00px;background:#c9cbd6"></div><div class="a t" style="left:320.00px;top:133.40px;width:60px;text-align:right;font-size:12.5px;color:#c8cad3;font-weight:normal;letter-spacing:0px;transform:scale(0.5,0.843);transform-origin:0 0;">500</div><div class="a" style="left:354.50px;top:158.92px;width:221.00px;height:1.00px;background:#45474f"></div><div class="a" style="left:350.50px;top:158.92px;width:4.00px;height:1.00px;background:#c9cbd6"></div><div class="a t" style="left:320.00px;top:153.92px;width:60px;text-align:right;font-size:12.5px;color:#c8cad3;font-weight:normal;letter-spacing:0px;transform:scale(0.5,0.843);transform-origin:0 0;">400</div><div class="a" style="left:354.50px;top:179.44px;width:221.00px;height:1.00px;background:#45474f"></div><div class="a" style="left:350.50px;top:179.44px;width:4.00px;height:1.00px;background:#c9cbd6"></div><div class="a t" style="left:320.00px;top:174.44px;width:60px;text-align:right;font-size:12.5px;color:#c8cad3;font-weight:normal;letter-spacing:0px;transform:scale(0.5,0.843);transform-origin:0 0;">300</div><div class="a" style="left:354.50px;top:199.96px;width:221.00px;height:1.00px;background:#45474f"></div><div class="a" style="left:350.50px;top:199.96px;width:4.00px;height:1.00px;background:#c9cbd6"></div><div class="a t" style="left:320.00px;top:194.96px;width:60px;text-align:right;font-size:12.5px;color:#c8cad3;font-weight:normal;letter-spacing:0px;transform:scale(0.5,0.843);transform-origin:0 0;">200</div><div class="a" style="left:354.50px;top:220.48px;width:221.00px;height:1.00px;background:#45474f"></div><div class="a" style="left:350.50px;top:220.48px;width:4.00px;height:1.00px;background:#c9cbd6"></div><div class="a t" style="left:320.00px;top:215.48px;width:60px;text-align:right;font-size:12.5px;color:#c8cad3;font-weight:normal;letter-spacing:0px;transform:scale(0.5,0.843);transform-origin:0 0;">100</div><div class="a" style="left:354.00px;top:125.00px;width:1.00px;height:117.00px;background:#c9cbd6"></div><div class="a" style="left:354.00px;top:241.00px;width:221.50px;height:1.00px;background:#c9cbd6"></div><div class="a t" style="left:320.00px;top:236.00px;width:60px;text-align:right;font-size:12.5px;color:#c8cad3;font-weight:normal;letter-spacing:0px;transform:scale(0.5,0.843);transform-origin:0 0;">0</div><div class="a" style="left:354.00px;top:241.00px;width:1.00px;height:4.00px;background:#c9cbd6"></div><div class="a" style="left:385.60px;top:241.00px;width:1.00px;height:4.00px;background:#c9cbd6"></div><div class="a" style="left:417.20px;top:241.00px;width:1.00px;height:4.00px;background:#c9cbd6"></div><div class="a" style="left:448.80px;top:241.00px;width:1.00px;height:4.00px;background:#c9cbd6"></div><div class="a" style="left:480.40px;top:241.00px;width:1.00px;height:4.00px;background:#c9cbd6"></div><div class="a" style="left:512.00px;top:241.00px;width:1.00px;height:4.00px;background:#c9cbd6"></div><div class="a" style="left:543.60px;top:241.00px;width:1.00px;height:4.00px;background:#c9cbd6"></div><div class="a" style="left:575.20px;top:241.00px;width:1.00px;height:4.00px;background:#c9cbd6"></div><div class="a t" style="left:350.20px;top:247.00px;width:80px;text-align:center;font-size:12.5px;color:#c8cad3;font-weight:normal;letter-spacing:0px;transform:scale(0.5,0.843);transform-origin:0 0;">11:00</div><div class="a t" style="left:381.80px;top:247.00px;width:80px;text-align:center;font-size:12.5px;color:#c8cad3;font-weight:normal;letter-spacing:0px;transform:scale(0.5,0.843);transform-origin:0 0;">11:30</div><div class="a t" style="left:413.40px;top:247.00px;width:80px;text-align:center;font-size:12.5px;color:#c8cad3;font-weight:normal;letter-spacing:0px;transform:scale(0.5,0.843);transform-origin:0 0;">12:00</div><div class="a t" style="left:445.00px;top:247.00px;width:80px;text-align:center;font-size:12.5px;color:#c8cad3;font-weight:normal;letter-spacing:0px;transform:scale(0.5,0.843);transform-origin:0 0;">12:30</div><div class="a t" style="left:476.60px;top:247.00px;width:80px;text-align:center;font-size:12.5px;color:#c8cad3;font-weight:normal;letter-spacing:0px;transform:scale(0.5,0.843);transform-origin:0 0;">13:00</div><div class="a t" style="left:508.20px;top:247.00px;width:80px;text-align:center;font-size:12.5px;color:#c8cad3;font-weight:normal;letter-spacing:0px;transform:scale(0.5,0.843);transform-origin:0 0;">13:30</div><div class="a t" style="left:539.80px;top:247.00px;width:80px;text-align:center;font-size:12.5px;color:#c8cad3;font-weight:normal;letter-spacing:0px;transform:scale(0.5,0.843);transform-origin:0 0;">14:00</div><div class="a" style="left:230.00px;top:348.00px;width:471.00px;height:332.00px;background:rgba(8,16,28,.55);border:1px solid #0a1e3e;"></div><div class="a t" style="left:234.00px;top:360.00px;width:600px;text-align:left;font-size:15.5px;color:#ffffff;font-weight:900;letter-spacing:0px;transform:scale(0.613,0.843);transform-origin:0 0;">钼丝碳化炉3#</div><div class="a t" style="left:456.00px;top:360.00px;width:400px;text-align:right;font-size:15.5px;color:#ffffff;font-weight:900;letter-spacing:0px;transform:scale(0.6,0.843);transform-origin:0 0;">当前生产:WC30碳化钨</div><div class="a" style="left:451.29999999999995px;top:382.2px;width:7px;height:12px;border-radius:50%;background:#5470c6"></div><div class="a t" style="left:460.50px;top:380.00px;width:600px;text-align:left;font-size:17.5px;color:#c3c5cc;font-weight:normal;letter-spacing:0px;transform:scale(0.5,0.843);transform-origin:0 0;">碳化</div><div class="a" style="left:231.50px;top:399.00px;width:99px;height:250.00px;overflow:hidden"><div class="a" style="left:12.0px;top:30.00px;width:75px;height:39.00px;background:linear-gradient(180deg,#2e3a55,#3f4a63)"></div><div class="a" style="left:12.0px;top:11.00px;width:75px;height:38px;border-radius:50%;background:#0d2d70"></div><div class="a" style="left:12.0px;top:69.00px;width:75px;height:150.40px;background:linear-gradient(180deg,#1450b8 0%,#0c3080 12%,#0b2b6e 50%,#0a2458 100%)"></div><div class="a" style="left:12.0px;top:106.50px;width:75px;height:70px;background:radial-gradient(ellipse at 50% 45%,rgba(30,90,190,.25),rgba(0,0,0,0) 65%)"></div><div class="a" style="left:12.0px;top:200.40px;width:75px;height:38px;border-radius:50%;background:linear-gradient(180deg,#10c4f4 0%,#0a86c8 45%,#0b3f8a 100%)"></div><div class="a" style="left:12.0px;top:50.00px;width:75px;height:38px;border-radius:50%;background:linear-gradient(180deg,#4b8ef5 0%,#5bb8dc 50%,#7ef2b0 100%);box-shadow:0 2px 8px 1px rgba(20,170,255,.75)"></div></div><div class="a t" style="left:231.00px;top:530.50px;width:200px;text-align:center;font-size:26px;color:#1fcbe6;font-weight:normal;letter-spacing:0px;transform:scale(0.5,0.843);transform-origin:0 0;">80.00%</div><div class="a" style="left:600.00px;top:399.00px;width:99px;height:250.00px;overflow:hidden"><div class="a" style="left:12px;top:30.00px;width:75px;height:41.00px;background:linear-gradient(180deg,#2e3a55,#3f4a63)"></div><div class="a" style="left:12px;top:11.00px;width:75px;height:38px;border-radius:50%;background:#0d2d70"></div><div class="a" style="left:12px;top:71.00px;width:75px;height:148.40px;background:linear-gradient(180deg,#1450b8 0%,#0c3080 12%,#0b2b6e 50%,#0a2458 100%)"></div><div class="a" style="left:12px;top:106.50px;width:75px;height:70px;background:radial-gradient(ellipse at 50% 45%,rgba(30,90,190,.25),rgba(0,0,0,0) 65%)"></div><div class="a" style="left:12px;top:200.40px;width:75px;height:38px;border-radius:50%;background:linear-gradient(180deg,#10c4f4 0%,#0a86c8 45%,#0b3f8a 100%)"></div><div class="a" style="left:12px;top:52.00px;width:75px;height:38px;border-radius:50%;background:linear-gradient(180deg,#4b8ef5 0%,#5bb8dc 50%,#7ef2b0 100%);box-shadow:0 2px 8px 1px rgba(20,170,255,.75)"></div></div><div class="a t" style="left:599.50px;top:530.50px;width:200px;text-align:center;font-size:26px;color:#1fcbe6;font-weight:normal;letter-spacing:0px;transform:scale(0.5,0.843);transform-origin:0 0;">78.93%</div><div class="a" style="left:354.00px;top:426.00px;width:1.00px;height:169.00px;background:#a9abb4"></div><div class="a" style="left:354.00px;top:591.00px;width:221.50px;height:1.00px;background:#9a9ca6"></div><div class="a" style="left:574.50px;top:591.00px;width:1.00px;height:4.00px;background:#9a9ca6"></div><div class="a" style="left:230.00px;top:698.00px;width:471.00px;height:173.00px;background:rgba(8,16,28,.55);border:1px solid #0a1e3e;border-bottom:none;"></div><div class="a t" style="left:234.00px;top:710.50px;width:600px;text-align:left;font-size:15.5px;color:#ffffff;font-weight:900;letter-spacing:0px;transform:scale(0.613,0.843);transform-origin:0 0;">方管碳化炉4#</div><div class="a t" style="left:456.00px;top:710.50px;width:400px;text-align:right;font-size:15.5px;color:#ffffff;font-weight:900;letter-spacing:0px;transform:scale(0.6,0.843);transform-origin:0 0;">当前生产:WC15碳化钨</div><div class="a" style="left:394.50px;top:733.00px;width:7px;height:12px;border-radius:50%;background:#5470c6"></div><div class="a t" style="left:403.50px;top:730.00px;width:600px;text-align:left;font-size:17.5px;color:#c3c5cc;font-weight:normal;letter-spacing:0px;transform:scale(0.5,0.843);transform-origin:0 0;">1带</div><div class="a" style="left:423.80px;top:733.00px;width:7px;height:12px;border-radius:50%;background:#91cc75"></div><div class="a t" style="left:432.80px;top:730.00px;width:600px;text-align:left;font-size:17.5px;color:#c3c5cc;font-weight:normal;letter-spacing:0px;transform:scale(0.5,0.843);transform-origin:0 0;">2带</div><div class="a" style="left:453.10px;top:733.00px;width:7px;height:12px;border-radius:50%;background:#fac858"></div><div class="a t" style="left:462.10px;top:730.00px;width:600px;text-align:left;font-size:17.5px;color:#c3c5cc;font-weight:normal;letter-spacing:0px;transform:scale(0.5,0.843);transform-origin:0 0;">3带</div><div class="a" style="left:482.40px;top:733.00px;width:7px;height:12px;border-radius:50%;background:#ee6666"></div><div class="a t" style="left:491.40px;top:730.00px;width:600px;text-align:left;font-size:17.5px;color:#c3c5cc;font-weight:normal;letter-spacing:0px;transform:scale(0.5,0.843);transform-origin:0 0;">4带</div><div class="a" style="left:511.70px;top:733.00px;width:7px;height:12px;border-radius:50%;background:#73c0de"></div><div class="a t" style="left:520.70px;top:730.00px;width:600px;text-align:left;font-size:17.5px;color:#c3c5cc;font-weight:normal;letter-spacing:0px;transform:scale(0.5,0.843);transform-origin:0 0;">5带</div><div class="a" style="left:232.00px;top:749.00px;width:99px;height:122.00px;overflow:hidden"><div class="a" style="left:12px;top:31.00px;width:75px;height:39.00px;background:linear-gradient(180deg,#2e3a55,#3f4a63)"></div><div class="a" style="left:12px;top:12.00px;width:75px;height:38px;border-radius:50%;background:#0d2d70"></div><div class="a" style="left:12px;top:70.00px;width:75px;height:57.00px;background:linear-gradient(180deg,#1557c8 0%,#0d3288 30%,#0c3080 100%)"></div><div class="a" style="left:12px;top:51.00px;width:75px;height:38px;border-radius:50%;background:linear-gradient(180deg,#4b8ef5 0%,#5bb8dc 50%,#7ef2b0 100%);box-shadow:0 2px 8px 1px rgba(20,170,255,.75)"></div></div><div class="a" style="left:600.00px;top:749.00px;width:99px;height:122.00px;overflow:hidden"><div class="a" style="left:12px;top:31.00px;width:75px;height:40.00px;background:linear-gradient(180deg,#2e3a55,#3f4a63)"></div><div class="a" style="left:12px;top:12.00px;width:75px;height:38px;border-radius:50%;background:#0d2d70"></div><div class="a" style="left:12px;top:71.00px;width:75px;height:56.00px;background:linear-gradient(180deg,#1557c8 0%,#0d3288 30%,#0c3080 100%)"></div><div class="a" style="left:12px;top:52.00px;width:75px;height:38px;border-radius:50%;background:linear-gradient(180deg,#4b8ef5 0%,#5bb8dc 50%,#7ef2b0 100%);box-shadow:0 2px 8px 1px rgba(20,170,255,.75)"></div></div><div class="a" style="left:354.50px;top:777.60px;width:221.00px;height:1.00px;background:#45474f"></div><div class="a" style="left:350.50px;top:777.60px;width:4.00px;height:1.00px;background:#c9cbd6"></div><div class="a t" style="left:320.00px;top:772.60px;width:60px;text-align:right;font-size:12.5px;color:#c8cad3;font-weight:normal;letter-spacing:0px;transform:scale(0.5,0.843);transform-origin:0 0;">800</div><div class="a" style="left:354.50px;top:798.20px;width:221.00px;height:1.00px;background:#45474f"></div><div class="a" style="left:350.50px;top:798.20px;width:4.00px;height:1.00px;background:#c9cbd6"></div><div class="a t" style="left:320.00px;top:793.20px;width:60px;text-align:right;font-size:12.5px;color:#c8cad3;font-weight:normal;letter-spacing:0px;transform:scale(0.5,0.843);transform-origin:0 0;">700</div><div class="a" style="left:354.50px;top:818.80px;width:221.00px;height:1.00px;background:#45474f"></div><div class="a" style="left:350.50px;top:818.80px;width:4.00px;height:1.00px;background:#c9cbd6"></div><div class="a t" style="left:320.00px;top:813.80px;width:60px;text-align:right;font-size:12.5px;color:#c8cad3;font-weight:normal;letter-spacing:0px;transform:scale(0.5,0.843);transform-origin:0 0;">600</div><div class="a" style="left:354.50px;top:839.40px;width:221.00px;height:1.00px;background:#45474f"></div><div class="a" style="left:350.50px;top:839.40px;width:4.00px;height:1.00px;background:#c9cbd6"></div><div class="a t" style="left:320.00px;top:834.40px;width:60px;text-align:right;font-size:12.5px;color:#c8cad3;font-weight:normal;letter-spacing:0px;transform:scale(0.5,0.843);transform-origin:0 0;">500</div><div class="a" style="left:354.50px;top:860.00px;width:221.00px;height:1.00px;background:#45474f"></div><div class="a" style="left:350.50px;top:860.00px;width:4.00px;height:1.00px;background:#c9cbd6"></div><div class="a t" style="left:320.00px;top:855.00px;width:60px;text-align:right;font-size:12.5px;color:#c8cad3;font-weight:normal;letter-spacing:0px;transform:scale(0.5,0.843);transform-origin:0 0;">400</div><div class="a" style="left:354.00px;top:777.00px;width:1.00px;height:94.00px;background:#c9cbd6"></div><div class="a" style="left:370.00px;top:789.30px;width:190.00px;height:2.60px;background:#86c6e4"></div><div class="a" style="left:367.50px;top:787.50px;width:5px;height:6px;border-radius:50%;background:#e8f6ff;border:1px solid #6fb8e0"></div><div class="a t" style="left:355.00px;top:772.00px;width:60px;text-align:center;font-size:12.5px;color:#ffffff;font-weight:bold;letter-spacing:0px;transform:scale(0.5,0.843);transform-origin:0 0;">739</div><div class="a" style="left:399.15px;top:787.50px;width:5px;height:6px;border-radius:50%;background:#e8f6ff;border:1px solid #6fb8e0"></div><div class="a t" style="left:386.65px;top:772.00px;width:60px;text-align:center;font-size:12.5px;color:#ffffff;font-weight:bold;letter-spacing:0px;transform:scale(0.5,0.843);transform-origin:0 0;">739</div><div class="a" style="left:430.80px;top:787.50px;width:5px;height:6px;border-radius:50%;background:#e8f6ff;border:1px solid #6fb8e0"></div><div class="a t" style="left:418.30px;top:772.00px;width:60px;text-align:center;font-size:12.5px;color:#ffffff;font-weight:bold;letter-spacing:0px;transform:scale(0.5,0.843);transform-origin:0 0;">738</div><div class="a" style="left:462.45px;top:787.50px;width:5px;height:6px;border-radius:50%;background:#e8f6ff;border:1px solid #6fb8e0"></div><div class="a t" style="left:449.95px;top:772.00px;width:60px;text-align:center;font-size:12.5px;color:#ffffff;font-weight:bold;letter-spacing:0px;transform:scale(0.5,0.843);transform-origin:0 0;">738</div><div class="a" style="left:494.10px;top:787.50px;width:5px;height:6px;border-radius:50%;background:#e8f6ff;border:1px solid #6fb8e0"></div><div class="a t" style="left:481.60px;top:772.00px;width:60px;text-align:center;font-size:12.5px;color:#ffffff;font-weight:bold;letter-spacing:0px;transform:scale(0.5,0.843);transform-origin:0 0;">738</div><div class="a" style="left:525.75px;top:787.50px;width:5px;height:6px;border-radius:50%;background:#e8f6ff;border:1px solid #6fb8e0"></div><div class="a t" style="left:513.25px;top:772.00px;width:60px;text-align:center;font-size:12.5px;color:#ffffff;font-weight:bold;letter-spacing:0px;transform:scale(0.5,0.843);transform-origin:0 0;">739</div><div class="a" style="left:557.40px;top:787.50px;width:5px;height:6px;border-radius:50%;background:#e8f6ff;border:1px solid #6fb8e0"></div><div class="a t" style="left:544.90px;top:772.00px;width:60px;text-align:center;font-size:12.5px;color:#ffffff;font-weight:bold;letter-spacing:0px;transform:scale(0.5,0.843);transform-origin:0 0;">739</div><div class="a t" style="left:748.00px;top:57.50px;width:200px;text-align:center;font-size:19.5px;color:#c8261e;font-weight:normal;letter-spacing:4.5px;transform:scale(0.5,0.843);transform-origin:0 0;">报警信息</div><div class="a t" style="left:741.50px;top:263.00px;width:600px;text-align:left;font-size:18.5px;color:#0d6efd;font-weight:900;letter-spacing:5.8px;transform:scale(0.5,0.843);transform-origin:0 0;">辅助设备实时监控</div><div class="a t" style="left:740.50px;top:308.00px;width:600px;text-align:left;font-size:14px;color:#f0f0f0;font-weight:bold;letter-spacing:0px;transform:scale(0.5,0.843);transform-origin:0 0;">#</div><div class="a t" style="left:736.00px;top:308.00px;width:200px;text-align:center;font-size:14px;color:#f0f0f0;font-weight:bold;letter-spacing:0px;transform:scale(0.5,0.843);transform-origin:0 0;">设备名称</div><div class="a t" style="left:795.50px;top:308.00px;width:300px;text-align:center;font-size:14px;color:#f0f0f0;font-weight:bold;letter-spacing:0px;transform:scale(0.5,0.843);transform-origin:0 0;">还原冷却循环水碳化1#</div><div class="a" style="left:736.00px;top:328.00px;width:212.50px;height:504.00px;background:#06111f"></div><div class="a t" style="left:740.50px;top:349.20px;width:600px;text-align:left;font-size:14px;color:#f2f4f8;font-weight:normal;letter-spacing:0px;transform:scale(0.5,0.843);transform-origin:0 0;">1</div><div class="a t" style="left:735.50px;top:349.20px;width:200px;text-align:center;font-size:14px;color:#ffffff;font-weight:500;letter-spacing:-0.3px;transform:scale(0.5,0.843);transform-origin:0 0;">喷淋泵出口压力1</div><div class="a t" style="left:820.60px;top:349.20px;width:200px;text-align:center;font-size:14px;color:#ffffff;font-weight:normal;letter-spacing:-0.3px;transform:scale(0.5,0.843);transform-origin:0 0;">0.00</div><div class="a" style="left:736.00px;top:383.50px;width:212.50px;height:1.00px;background:#07141f"></div><div class="a t" style="left:740.50px;top:405.20px;width:600px;text-align:left;font-size:14px;color:#f2f4f8;font-weight:normal;letter-spacing:0px;transform:scale(0.5,0.843);transform-origin:0 0;">2</div><div class="a t" style="left:735.50px;top:405.20px;width:200px;text-align:center;font-size:14px;color:#ffffff;font-weight:500;letter-spacing:-0.3px;transform:scale(0.5,0.843);transform-origin:0 0;">设定温度</div><div class="a t" style="left:820.60px;top:405.20px;width:200px;text-align:center;font-size:14px;color:#ffffff;font-weight:normal;letter-spacing:-0.3px;transform:scale(0.5,0.843);transform-origin:0 0;">450.00</div><div class="a" style="left:736.00px;top:439.50px;width:212.50px;height:1.00px;background:#07141f"></div><div class="a t" style="left:740.50px;top:461.20px;width:600px;text-align:left;font-size:14px;color:#f2f4f8;font-weight:normal;letter-spacing:0px;transform:scale(0.5,0.843);transform-origin:0 0;">3</div><div class="a t" style="left:735.50px;top:461.20px;width:200px;text-align:center;font-size:14px;color:#ffffff;font-weight:500;letter-spacing:-0.3px;transform:scale(0.5,0.843);transform-origin:0 0;">水池液位</div><div class="a t" style="left:820.60px;top:461.20px;width:200px;text-align:center;font-size:14px;color:#ffffff;font-weight:normal;letter-spacing:-0.3px;transform:scale(0.5,0.843);transform-origin:0 0;">1701.00</div><div class="a" style="left:736.00px;top:495.50px;width:212.50px;height:1.00px;background:#07141f"></div><div class="a t" style="left:740.50px;top:517.20px;width:600px;text-align:left;font-size:14px;color:#f2f4f8;font-weight:normal;letter-spacing:0px;transform:scale(0.5,0.843);transform-origin:0 0;">4</div><div class="a t" style="left:735.50px;top:517.20px;width:200px;text-align:center;font-size:14px;color:#ffffff;font-weight:500;letter-spacing:-0.3px;transform:scale(0.5,0.843);transform-origin:0 0;">设定压力</div><div class="a t" style="left:820.60px;top:517.20px;width:200px;text-align:center;font-size:14px;color:#ffffff;font-weight:normal;letter-spacing:-0.3px;transform:scale(0.5,0.843);transform-origin:0 0;">300.00</div><div class="a" style="left:736.00px;top:551.50px;width:212.50px;height:1.00px;background:#07141f"></div><div class="a t" style="left:740.50px;top:573.20px;width:600px;text-align:left;font-size:14px;color:#f2f4f8;font-weight:normal;letter-spacing:0px;transform:scale(0.5,0.843);transform-origin:0 0;">5</div><div class="a t" style="left:735.50px;top:573.20px;width:200px;text-align:center;font-size:14px;color:#ffffff;font-weight:500;letter-spacing:-0.3px;transform:scale(0.5,0.843);transform-origin:0 0;">淋泵出口压力2</div><div class="a t" style="left:820.60px;top:573.20px;width:200px;text-align:center;font-size:14px;color:#ffffff;font-weight:normal;letter-spacing:-0.3px;transform:scale(0.5,0.843);transform-origin:0 0;">0.00</div><div class="a" style="left:736.00px;top:607.50px;width:212.50px;height:1.00px;background:#07141f"></div><div class="a t" style="left:740.50px;top:629.20px;width:600px;text-align:left;font-size:14px;color:#f2f4f8;font-weight:normal;letter-spacing:0px;transform:scale(0.5,0.843);transform-origin:0 0;">6</div><div class="a t" style="left:735.50px;top:629.20px;width:200px;text-align:center;font-size:14px;color:#ffffff;font-weight:500;letter-spacing:-0.3px;transform:scale(0.5,0.843);transform-origin:0 0;">循环泵出口压力1</div><div class="a t" style="left:820.60px;top:629.20px;width:200px;text-align:center;font-size:14px;color:#ffffff;font-weight:normal;letter-spacing:-0.3px;transform:scale(0.5,0.843);transform-origin:0 0;">0.00</div><div class="a" style="left:736.00px;top:663.50px;width:212.50px;height:1.00px;background:#07141f"></div><div class="a t" style="left:740.50px;top:685.20px;width:600px;text-align:left;font-size:14px;color:#f2f4f8;font-weight:normal;letter-spacing:0px;transform:scale(0.5,0.843);transform-origin:0 0;">7</div><div class="a t" style="left:735.50px;top:685.20px;width:200px;text-align:center;font-size:14px;color:#ffffff;font-weight:500;letter-spacing:-0.3px;transform:scale(0.5,0.843);transform-origin:0 0;">循环泵出口压力2</div><div class="a t" style="left:820.60px;top:685.20px;width:200px;text-align:center;font-size:14px;color:#ffffff;font-weight:normal;letter-spacing:-0.3px;transform:scale(0.5,0.843);transform-origin:0 0;">255.00</div><div class="a" style="left:736.00px;top:719.50px;width:212.50px;height:1.00px;background:#07141f"></div><div class="a t" style="left:740.50px;top:741.20px;width:600px;text-align:left;font-size:14px;color:#f2f4f8;font-weight:normal;letter-spacing:0px;transform:scale(0.5,0.843);transform-origin:0 0;">8</div><div class="a t" style="left:735.50px;top:741.20px;width:200px;text-align:center;font-size:14px;color:#ffffff;font-weight:500;letter-spacing:-0.3px;transform:scale(0.5,0.843);transform-origin:0 0;">循环泵总管压力</div><div class="a t" style="left:820.60px;top:741.20px;width:200px;text-align:center;font-size:14px;color:#ffffff;font-weight:normal;letter-spacing:-0.3px;transform:scale(0.5,0.843);transform-origin:0 0;">196.00</div><div class="a" style="left:736.00px;top:775.50px;width:212.50px;height:1.00px;background:#07141f"></div><div class="a t" style="left:740.50px;top:797.20px;width:600px;text-align:left;font-size:14px;color:#f2f4f8;font-weight:normal;letter-spacing:0px;transform:scale(0.5,0.843);transform-origin:0 0;">9</div><div class="a t" style="left:735.50px;top:797.20px;width:200px;text-align:center;font-size:14px;color:#ffffff;font-weight:500;letter-spacing:-0.3px;transform:scale(0.5,0.843);transform-origin:0 0;">水池温度</div><div class="a t" style="left:820.60px;top:797.20px;width:200px;text-align:center;font-size:14px;color:#ffffff;font-weight:normal;letter-spacing:-0.3px;transform:scale(0.5,0.843);transform-origin:0 0;">335.00</div></div><div class="a " style="left:959px;top:1031px;width:960px;height:1px;background:#6e6e6e"></div></body></html>
